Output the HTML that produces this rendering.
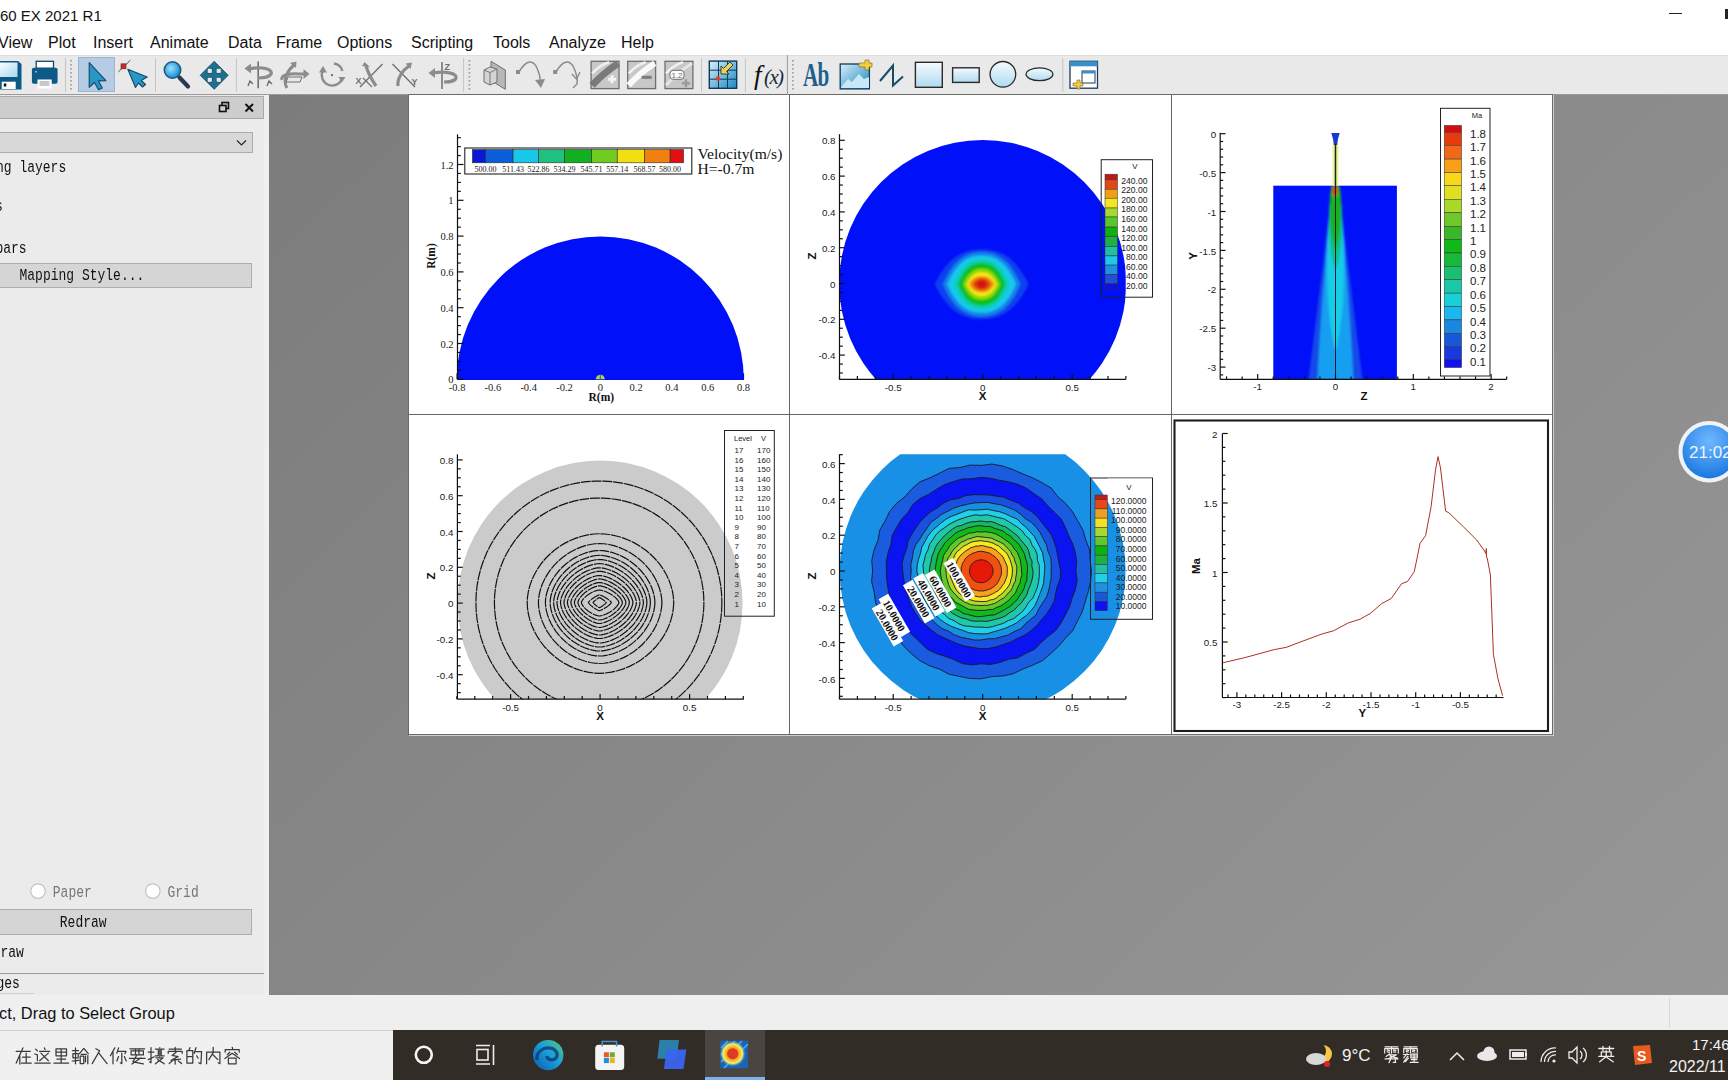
<!DOCTYPE html><html><head><meta charset="utf-8"><style>
*{margin:0;padding:0;box-sizing:border-box}
html,body{width:1728px;height:1080px;overflow:hidden;background:#fff;font-family:"Liberation Sans",sans-serif}
.a{position:absolute}
.t{position:absolute;white-space:nowrap;line-height:1}
.m{font-family:"Liberation Mono",monospace}
.s{font-family:"Liberation Serif",serif}
svg{position:absolute;overflow:visible}
</style></head><body>
<div class="t" style="left:0px;top:7.5px;font-size:15px;color:#111">60 EX 2021 R1</div>
<div class="a" style="left:1669px;top:13px;width:13px;height:1px;background:#222"></div>
<div class="a" style="left:1725px;top:9px;width:3px;height:10px;background:#222"></div>
<div class="t" style="left:-2px;top:35px;font-size:16px;color:#111">View</div>
<div class="t" style="left:48px;top:35px;font-size:16px;color:#111">Plot</div>
<div class="t" style="left:93px;top:35px;font-size:16px;color:#111">Insert</div>
<div class="t" style="left:150px;top:35px;font-size:16px;color:#111">Animate</div>
<div class="t" style="left:228px;top:35px;font-size:16px;color:#111">Data</div>
<div class="t" style="left:276px;top:35px;font-size:16px;color:#111">Frame</div>
<div class="t" style="left:337px;top:35px;font-size:16px;color:#111">Options</div>
<div class="t" style="left:411px;top:35px;font-size:16px;color:#111">Scripting</div>
<div class="t" style="left:493px;top:35px;font-size:16px;color:#111">Tools</div>
<div class="t" style="left:549px;top:35px;font-size:16px;color:#111">Analyze</div>
<div class="t" style="left:621px;top:35px;font-size:16px;color:#111">Help</div>
<div class="a" style="left:0;top:55px;width:1728px;height:40px;background:#e9e9e9;border-top:1px solid #dedede;border-bottom:1px solid #9a9a9a"></div>
<div class="a" style="left:0;top:95px;width:269px;height:900px;background:#ebebeb"></div>
<div class="a" style="left:269px;top:95px;width:1459px;height:900px;background:linear-gradient(137deg,#7c7c7c 0%,#979797 100%)"></div>
<div class="a" style="left:408px;top:94px;width:1145px;height:641px;background:#fff;border:1px solid #6a6a6a;box-shadow:1px 1px 0 #cfcfcf"></div>
<div class="a" style="left:0;top:995px;width:1728px;height:35px;background:#efefef"></div>
<div class="a" style="left:0;top:1030px;width:1728px;height:50px;background:#322c26"></div>
<div class="a" style="left:0;top:1030px;width:393px;height:50px;background:#f0f0f0;border-top:1px solid #d0d0d0"></div>
<svg style="left:0;top:0" width="1728" height="1080" viewBox="0 0 1728 1080">
<line x1="789.5" y1="95" x2="789.5" y2="735" stroke="#666" stroke-width="1"/>
<line x1="1171.5" y1="95" x2="1171.5" y2="735" stroke="#666" stroke-width="1"/>
<line x1="409" y1="414.5" x2="1553" y2="414.5" stroke="#666" stroke-width="1"/>
<line x1="457.5" y1="379.3" x2="744.0" y2="379.3" stroke="#111" stroke-width="1.2"/>
<line x1="457.10" y1="379.3" x2="457.10" y2="373.3" stroke="#111" stroke-width="1.2"/>
<text x="457.10" y="387.3" text-anchor="middle" dominant-baseline="central" font-family="Liberation Serif" font-size="10.5" fill="#1a1a1a">-0.8</text>
<line x1="466.05" y1="379.3" x2="466.05" y2="376.0" stroke="#111" stroke-width="1.2"/>
<line x1="475.00" y1="379.3" x2="475.00" y2="376.0" stroke="#111" stroke-width="1.2"/>
<line x1="483.95" y1="379.3" x2="483.95" y2="376.0" stroke="#111" stroke-width="1.2"/>
<line x1="492.90" y1="379.3" x2="492.90" y2="373.3" stroke="#111" stroke-width="1.2"/>
<text x="492.90" y="387.3" text-anchor="middle" dominant-baseline="central" font-family="Liberation Serif" font-size="10.5" fill="#1a1a1a">-0.6</text>
<line x1="501.85" y1="379.3" x2="501.85" y2="376.0" stroke="#111" stroke-width="1.2"/>
<line x1="510.80" y1="379.3" x2="510.80" y2="376.0" stroke="#111" stroke-width="1.2"/>
<line x1="519.75" y1="379.3" x2="519.75" y2="376.0" stroke="#111" stroke-width="1.2"/>
<line x1="528.70" y1="379.3" x2="528.70" y2="373.3" stroke="#111" stroke-width="1.2"/>
<text x="528.70" y="387.3" text-anchor="middle" dominant-baseline="central" font-family="Liberation Serif" font-size="10.5" fill="#1a1a1a">-0.4</text>
<line x1="537.65" y1="379.3" x2="537.65" y2="376.0" stroke="#111" stroke-width="1.2"/>
<line x1="546.60" y1="379.3" x2="546.60" y2="376.0" stroke="#111" stroke-width="1.2"/>
<line x1="555.55" y1="379.3" x2="555.55" y2="376.0" stroke="#111" stroke-width="1.2"/>
<line x1="564.50" y1="379.3" x2="564.50" y2="373.3" stroke="#111" stroke-width="1.2"/>
<text x="564.50" y="387.3" text-anchor="middle" dominant-baseline="central" font-family="Liberation Serif" font-size="10.5" fill="#1a1a1a">-0.2</text>
<line x1="573.45" y1="379.3" x2="573.45" y2="376.0" stroke="#111" stroke-width="1.2"/>
<line x1="582.40" y1="379.3" x2="582.40" y2="376.0" stroke="#111" stroke-width="1.2"/>
<line x1="591.35" y1="379.3" x2="591.35" y2="376.0" stroke="#111" stroke-width="1.2"/>
<line x1="600.30" y1="379.3" x2="600.30" y2="373.3" stroke="#111" stroke-width="1.2"/>
<text x="600.30" y="387.3" text-anchor="middle" dominant-baseline="central" font-family="Liberation Serif" font-size="10.5" fill="#1a1a1a">0</text>
<line x1="609.25" y1="379.3" x2="609.25" y2="376.0" stroke="#111" stroke-width="1.2"/>
<line x1="618.20" y1="379.3" x2="618.20" y2="376.0" stroke="#111" stroke-width="1.2"/>
<line x1="627.15" y1="379.3" x2="627.15" y2="376.0" stroke="#111" stroke-width="1.2"/>
<line x1="636.10" y1="379.3" x2="636.10" y2="373.3" stroke="#111" stroke-width="1.2"/>
<text x="636.10" y="387.3" text-anchor="middle" dominant-baseline="central" font-family="Liberation Serif" font-size="10.5" fill="#1a1a1a">0.2</text>
<line x1="645.05" y1="379.3" x2="645.05" y2="376.0" stroke="#111" stroke-width="1.2"/>
<line x1="654.00" y1="379.3" x2="654.00" y2="376.0" stroke="#111" stroke-width="1.2"/>
<line x1="662.95" y1="379.3" x2="662.95" y2="376.0" stroke="#111" stroke-width="1.2"/>
<line x1="671.90" y1="379.3" x2="671.90" y2="373.3" stroke="#111" stroke-width="1.2"/>
<text x="671.90" y="387.3" text-anchor="middle" dominant-baseline="central" font-family="Liberation Serif" font-size="10.5" fill="#1a1a1a">0.4</text>
<line x1="680.85" y1="379.3" x2="680.85" y2="376.0" stroke="#111" stroke-width="1.2"/>
<line x1="689.80" y1="379.3" x2="689.80" y2="376.0" stroke="#111" stroke-width="1.2"/>
<line x1="698.75" y1="379.3" x2="698.75" y2="376.0" stroke="#111" stroke-width="1.2"/>
<line x1="707.70" y1="379.3" x2="707.70" y2="373.3" stroke="#111" stroke-width="1.2"/>
<text x="707.70" y="387.3" text-anchor="middle" dominant-baseline="central" font-family="Liberation Serif" font-size="10.5" fill="#1a1a1a">0.6</text>
<line x1="716.65" y1="379.3" x2="716.65" y2="376.0" stroke="#111" stroke-width="1.2"/>
<line x1="725.60" y1="379.3" x2="725.60" y2="376.0" stroke="#111" stroke-width="1.2"/>
<line x1="734.55" y1="379.3" x2="734.55" y2="376.0" stroke="#111" stroke-width="1.2"/>
<line x1="743.50" y1="379.3" x2="743.50" y2="373.3" stroke="#111" stroke-width="1.2"/>
<text x="743.50" y="387.3" text-anchor="middle" dominant-baseline="central" font-family="Liberation Serif" font-size="10.5" fill="#1a1a1a">0.8</text>
<defs><clipPath id="c1"><rect x="457.5" y="134" width="286.5" height="246"/></clipPath></defs>
<g clip-path="url(#c1)"><path d="M456.8,379.90000000000003 A143.5,143.5 0 0 1 743.8,379.90000000000003 Z" fill="#0010f8"/></g>
<path d="M595.8,379.3 A4.5,4.5 0 0 1 604.8,379.3 Z" fill="#a8d84a"/>
<line x1="600.3" y1="374.3" x2="600.3" y2="379.3" stroke="#3050a0" stroke-width="1"/>
<line x1="457.5" y1="134.3" x2="457.5" y2="379.3" stroke="#111" stroke-width="1.2"/>
<line x1="457.5" y1="379.30" x2="463.5" y2="379.30" stroke="#111" stroke-width="1.2"/>
<text x="453.5" y="379.90" text-anchor="end" dominant-baseline="central" font-family="Liberation Serif" font-size="10.5" fill="#1a1a1a">0</text>
<line x1="457.5" y1="370.35" x2="460.8" y2="370.35" stroke="#111" stroke-width="1.2"/>
<line x1="457.5" y1="361.40" x2="460.8" y2="361.40" stroke="#111" stroke-width="1.2"/>
<line x1="457.5" y1="352.45" x2="460.8" y2="352.45" stroke="#111" stroke-width="1.2"/>
<line x1="457.5" y1="343.50" x2="463.5" y2="343.50" stroke="#111" stroke-width="1.2"/>
<text x="453.5" y="344.10" text-anchor="end" dominant-baseline="central" font-family="Liberation Serif" font-size="10.5" fill="#1a1a1a">0.2</text>
<line x1="457.5" y1="334.55" x2="460.8" y2="334.55" stroke="#111" stroke-width="1.2"/>
<line x1="457.5" y1="325.60" x2="460.8" y2="325.60" stroke="#111" stroke-width="1.2"/>
<line x1="457.5" y1="316.65" x2="460.8" y2="316.65" stroke="#111" stroke-width="1.2"/>
<line x1="457.5" y1="307.70" x2="463.5" y2="307.70" stroke="#111" stroke-width="1.2"/>
<text x="453.5" y="308.30" text-anchor="end" dominant-baseline="central" font-family="Liberation Serif" font-size="10.5" fill="#1a1a1a">0.4</text>
<line x1="457.5" y1="298.75" x2="460.8" y2="298.75" stroke="#111" stroke-width="1.2"/>
<line x1="457.5" y1="289.80" x2="460.8" y2="289.80" stroke="#111" stroke-width="1.2"/>
<line x1="457.5" y1="280.85" x2="460.8" y2="280.85" stroke="#111" stroke-width="1.2"/>
<line x1="457.5" y1="271.90" x2="463.5" y2="271.90" stroke="#111" stroke-width="1.2"/>
<text x="453.5" y="272.50" text-anchor="end" dominant-baseline="central" font-family="Liberation Serif" font-size="10.5" fill="#1a1a1a">0.6</text>
<line x1="457.5" y1="262.95" x2="460.8" y2="262.95" stroke="#111" stroke-width="1.2"/>
<line x1="457.5" y1="254.00" x2="460.8" y2="254.00" stroke="#111" stroke-width="1.2"/>
<line x1="457.5" y1="245.05" x2="460.8" y2="245.05" stroke="#111" stroke-width="1.2"/>
<line x1="457.5" y1="236.10" x2="463.5" y2="236.10" stroke="#111" stroke-width="1.2"/>
<text x="453.5" y="236.70" text-anchor="end" dominant-baseline="central" font-family="Liberation Serif" font-size="10.5" fill="#1a1a1a">0.8</text>
<line x1="457.5" y1="227.15" x2="460.8" y2="227.15" stroke="#111" stroke-width="1.2"/>
<line x1="457.5" y1="218.20" x2="460.8" y2="218.20" stroke="#111" stroke-width="1.2"/>
<line x1="457.5" y1="209.25" x2="460.8" y2="209.25" stroke="#111" stroke-width="1.2"/>
<line x1="457.5" y1="200.30" x2="463.5" y2="200.30" stroke="#111" stroke-width="1.2"/>
<text x="453.5" y="200.90" text-anchor="end" dominant-baseline="central" font-family="Liberation Serif" font-size="10.5" fill="#1a1a1a">1</text>
<line x1="457.5" y1="191.35" x2="460.8" y2="191.35" stroke="#111" stroke-width="1.2"/>
<line x1="457.5" y1="182.40" x2="460.8" y2="182.40" stroke="#111" stroke-width="1.2"/>
<line x1="457.5" y1="173.45" x2="460.8" y2="173.45" stroke="#111" stroke-width="1.2"/>
<line x1="457.5" y1="164.50" x2="463.5" y2="164.50" stroke="#111" stroke-width="1.2"/>
<text x="453.5" y="165.10" text-anchor="end" dominant-baseline="central" font-family="Liberation Serif" font-size="10.5" fill="#1a1a1a">1.2</text>
<line x1="457.5" y1="155.55" x2="460.8" y2="155.55" stroke="#111" stroke-width="1.2"/>
<line x1="457.5" y1="146.60" x2="460.8" y2="146.60" stroke="#111" stroke-width="1.2"/>
<line x1="457.5" y1="137.65" x2="460.8" y2="137.65" stroke="#111" stroke-width="1.2"/>
<text x="601.3" y="396.5" text-anchor="middle" dominant-baseline="central" font-family="Liberation Serif" font-weight="bold" font-size="11.5" fill="#111">R(m)</text>
<text transform="translate(431,256) rotate(-90)" text-anchor="middle" dominant-baseline="central" font-family="Liberation Serif" font-weight="bold" font-size="11.5" fill="#111">R(m)</text>
<rect x="464.8" y="148" width="227" height="26" fill="#fff" stroke="#222" stroke-width="1.1"/>
<rect x="472.42" y="149.6" width="13.14" height="13.2" fill="#0818d8" stroke="#2a2a2a" stroke-width="0.6"/>
<rect x="485.56" y="149.6" width="27.50" height="13.2" fill="#0a5ed8" stroke="#2a2a2a" stroke-width="0.6"/>
<rect x="513.06" y="149.6" width="25.36" height="13.2" fill="#18c8e8" stroke="#2a2a2a" stroke-width="0.6"/>
<rect x="538.42" y="149.6" width="25.97" height="13.2" fill="#20c080" stroke="#2a2a2a" stroke-width="0.6"/>
<rect x="564.39" y="149.6" width="27.19" height="13.2" fill="#10b020" stroke="#2a2a2a" stroke-width="0.6"/>
<rect x="591.58" y="149.6" width="25.67" height="13.2" fill="#70cc20" stroke="#2a2a2a" stroke-width="0.6"/>
<rect x="617.25" y="149.6" width="27.19" height="13.2" fill="#f0e010" stroke="#2a2a2a" stroke-width="0.6"/>
<rect x="644.45" y="149.6" width="25.67" height="13.2" fill="#f08010" stroke="#2a2a2a" stroke-width="0.6"/>
<rect x="670.11" y="149.6" width="13.44" height="13.2" fill="#e01010" stroke="#2a2a2a" stroke-width="0.6"/>
<text x="485.6" y="169" text-anchor="middle" dominant-baseline="central" font-family="Liberation Serif" font-size="8" fill="#222">500.00</text>
<text x="513.1" y="169" text-anchor="middle" dominant-baseline="central" font-family="Liberation Serif" font-size="8" fill="#222">511.43</text>
<text x="538.4" y="169" text-anchor="middle" dominant-baseline="central" font-family="Liberation Serif" font-size="8" fill="#222">522.86</text>
<text x="564.4" y="169" text-anchor="middle" dominant-baseline="central" font-family="Liberation Serif" font-size="8" fill="#222">534.29</text>
<text x="591.6" y="169" text-anchor="middle" dominant-baseline="central" font-family="Liberation Serif" font-size="8" fill="#222">545.71</text>
<text x="617.3" y="169" text-anchor="middle" dominant-baseline="central" font-family="Liberation Serif" font-size="8" fill="#222">557.14</text>
<text x="644.4" y="169" text-anchor="middle" dominant-baseline="central" font-family="Liberation Serif" font-size="8" fill="#222">568.57</text>
<text x="670.1" y="169" text-anchor="middle" dominant-baseline="central" font-family="Liberation Serif" font-size="8" fill="#222">580.00</text>
<text x="697.5" y="153" dominant-baseline="central" font-family="Liberation Serif" font-size="15.6" fill="#111">Velocity(m/s)</text>
<text x="697.5" y="168.5" dominant-baseline="central" font-family="Liberation Serif" font-size="15.6" fill="#111">H=-0.7m</text>
<defs><clipPath id="c2"><rect x="839.5" y="134.2" width="286.2" height="245.2"/></clipPath><filter id="bl1" x="-20%" y="-20%" width="140%" height="140%"><feGaussianBlur stdDeviation="1.0"/></filter></defs>
<g clip-path="url(#c2)"><circle cx="982.7" cy="283.5" r="143.5" fill="#0010f8"/></g>
<g filter="url(#bl1)">
<path d="M934.80,284.20 C945.12,262.50 958.25,249.20 981.70,249.20 C1005.15,249.20 1018.28,262.50 1028.60,284.20 C1018.28,305.90 1005.15,319.20 981.70,319.20 C958.25,319.20 945.12,305.90 934.80,284.20 Z" fill="#1040f0"/>
<path d="M943.00,284.20 C951.51,264.17 962.35,251.90 981.70,251.90 C1001.05,251.90 1011.89,264.17 1020.40,284.20 C1011.89,304.23 1001.05,316.50 981.70,316.50 C962.35,316.50 951.51,304.23 943.00,284.20 Z" fill="#1880e8"/>
<path d="M947.40,284.20 C954.95,266.47 964.55,255.60 981.70,255.60 C998.85,255.60 1008.45,266.47 1016.00,284.20 C1008.45,301.93 998.85,312.80 981.70,312.80 C964.55,312.80 954.95,301.93 947.40,284.20 Z" fill="#18c8f0"/>
<path d="M953.70,284.20 C959.86,268.76 967.70,259.30 981.70,259.30 C995.70,259.30 1003.54,268.76 1009.70,284.20 C1003.54,299.64 995.70,309.10 981.70,309.10 C967.70,309.10 959.86,299.64 953.70,284.20 Z" fill="#10d0b0"/>
<path d="M957.70,284.20 C962.98,270.87 969.70,262.70 981.70,262.70 C993.70,262.70 1000.42,270.87 1005.70,284.20 C1000.42,297.53 993.70,305.70 981.70,305.70 C969.70,305.70 962.98,297.53 957.70,284.20 Z" fill="#10c040"/>
<path d="M961.20,284.20 C965.71,272.17 971.45,264.80 981.70,264.80 C991.95,264.80 997.69,272.17 1002.20,284.20 C997.69,296.23 991.95,303.60 981.70,303.60 C971.45,303.60 965.71,296.23 961.20,284.20 Z" fill="#10c010"/>
<path d="M963.30,284.20 C967.35,274.53 972.50,268.60 981.70,268.60 C990.90,268.60 996.05,274.53 1000.10,284.20 C996.05,293.87 990.90,299.80 981.70,299.80 C972.50,299.80 967.35,293.87 963.30,284.20 Z" fill="#90d810"/>
<path d="M966.70,284.20 C970.00,276.82 974.20,272.30 981.70,272.30 C989.20,272.30 993.40,276.82 996.70,284.20 C993.40,291.58 989.20,296.10 981.70,296.10 C974.20,296.10 970.00,291.58 966.70,284.20 Z" fill="#f8e818"/>
<path d="M968.90,284.20 C971.72,279.12 975.30,276.00 981.70,276.00 C988.10,276.00 991.68,279.12 994.50,284.20 C991.68,289.28 988.10,292.40 981.70,292.40 C975.30,292.40 971.72,289.28 968.90,284.20 Z" fill="#f09010"/>
<path d="M972.60,284.20 C974.60,280.48 977.15,278.20 981.70,278.20 C986.25,278.20 988.80,280.48 990.80,284.20 C988.80,287.92 986.25,290.20 981.70,290.20 C977.15,290.20 974.60,287.92 972.60,284.20 Z" fill="#e04010"/>
<path d="M976.70,284.20 C977.80,281.72 979.20,280.20 981.70,280.20 C984.20,280.20 985.60,281.72 986.70,284.20 C985.60,286.68 984.20,288.20 981.70,288.20 C979.20,288.20 977.80,286.68 976.70,284.20 Z" fill="#d01808"/>
</g>
<line x1="839.5" y1="134.2" x2="839.5" y2="379.4" stroke="#111" stroke-width="1.2"/>
<line x1="839.5" y1="373.00" x2="842.8" y2="373.00" stroke="#111" stroke-width="1.2"/>
<line x1="839.5" y1="364.05" x2="842.8" y2="364.05" stroke="#111" stroke-width="1.2"/>
<line x1="839.5" y1="355.10" x2="844.8" y2="355.10" stroke="#111" stroke-width="1.2"/>
<text x="835.5" y="355.70" text-anchor="end" dominant-baseline="central" font-family="Liberation Sans" font-size="9.8" fill="#1a1a1a">-0.4</text>
<line x1="839.5" y1="346.15" x2="842.8" y2="346.15" stroke="#111" stroke-width="1.2"/>
<line x1="839.5" y1="337.20" x2="842.8" y2="337.20" stroke="#111" stroke-width="1.2"/>
<line x1="839.5" y1="328.25" x2="842.8" y2="328.25" stroke="#111" stroke-width="1.2"/>
<line x1="839.5" y1="319.30" x2="844.8" y2="319.30" stroke="#111" stroke-width="1.2"/>
<text x="835.5" y="319.90" text-anchor="end" dominant-baseline="central" font-family="Liberation Sans" font-size="9.8" fill="#1a1a1a">-0.2</text>
<line x1="839.5" y1="310.35" x2="842.8" y2="310.35" stroke="#111" stroke-width="1.2"/>
<line x1="839.5" y1="301.40" x2="842.8" y2="301.40" stroke="#111" stroke-width="1.2"/>
<line x1="839.5" y1="292.45" x2="842.8" y2="292.45" stroke="#111" stroke-width="1.2"/>
<line x1="839.5" y1="283.50" x2="844.8" y2="283.50" stroke="#111" stroke-width="1.2"/>
<text x="835.5" y="284.10" text-anchor="end" dominant-baseline="central" font-family="Liberation Sans" font-size="9.8" fill="#1a1a1a">0</text>
<line x1="839.5" y1="274.55" x2="842.8" y2="274.55" stroke="#111" stroke-width="1.2"/>
<line x1="839.5" y1="265.60" x2="842.8" y2="265.60" stroke="#111" stroke-width="1.2"/>
<line x1="839.5" y1="256.65" x2="842.8" y2="256.65" stroke="#111" stroke-width="1.2"/>
<line x1="839.5" y1="247.70" x2="844.8" y2="247.70" stroke="#111" stroke-width="1.2"/>
<text x="835.5" y="248.30" text-anchor="end" dominant-baseline="central" font-family="Liberation Sans" font-size="9.8" fill="#1a1a1a">0.2</text>
<line x1="839.5" y1="238.75" x2="842.8" y2="238.75" stroke="#111" stroke-width="1.2"/>
<line x1="839.5" y1="229.80" x2="842.8" y2="229.80" stroke="#111" stroke-width="1.2"/>
<line x1="839.5" y1="220.85" x2="842.8" y2="220.85" stroke="#111" stroke-width="1.2"/>
<line x1="839.5" y1="211.90" x2="844.8" y2="211.90" stroke="#111" stroke-width="1.2"/>
<text x="835.5" y="212.50" text-anchor="end" dominant-baseline="central" font-family="Liberation Sans" font-size="9.8" fill="#1a1a1a">0.4</text>
<line x1="839.5" y1="202.95" x2="842.8" y2="202.95" stroke="#111" stroke-width="1.2"/>
<line x1="839.5" y1="194.00" x2="842.8" y2="194.00" stroke="#111" stroke-width="1.2"/>
<line x1="839.5" y1="185.05" x2="842.8" y2="185.05" stroke="#111" stroke-width="1.2"/>
<line x1="839.5" y1="176.10" x2="844.8" y2="176.10" stroke="#111" stroke-width="1.2"/>
<text x="835.5" y="176.70" text-anchor="end" dominant-baseline="central" font-family="Liberation Sans" font-size="9.8" fill="#1a1a1a">0.6</text>
<line x1="839.5" y1="167.15" x2="842.8" y2="167.15" stroke="#111" stroke-width="1.2"/>
<line x1="839.5" y1="158.20" x2="842.8" y2="158.20" stroke="#111" stroke-width="1.2"/>
<line x1="839.5" y1="149.25" x2="842.8" y2="149.25" stroke="#111" stroke-width="1.2"/>
<line x1="839.5" y1="140.30" x2="844.8" y2="140.30" stroke="#111" stroke-width="1.2"/>
<text x="835.5" y="140.90" text-anchor="end" dominant-baseline="central" font-family="Liberation Sans" font-size="9.8" fill="#1a1a1a">0.8</text>
<line x1="839.5" y1="379.4" x2="1125.7" y2="379.4" stroke="#111" stroke-width="1.2"/>
<line x1="839.50" y1="379.4" x2="839.50" y2="376.09999999999997" stroke="#111" stroke-width="1.2"/>
<line x1="857.40" y1="379.4" x2="857.40" y2="376.09999999999997" stroke="#111" stroke-width="1.2"/>
<line x1="875.30" y1="379.4" x2="875.30" y2="376.09999999999997" stroke="#111" stroke-width="1.2"/>
<line x1="893.20" y1="379.4" x2="893.20" y2="374.09999999999997" stroke="#111" stroke-width="1.2"/>
<text x="893.20" y="387.2" text-anchor="middle" dominant-baseline="central" font-family="Liberation Sans" font-size="9.8" fill="#1a1a1a">-0.5</text>
<line x1="911.10" y1="379.4" x2="911.10" y2="376.09999999999997" stroke="#111" stroke-width="1.2"/>
<line x1="929.00" y1="379.4" x2="929.00" y2="376.09999999999997" stroke="#111" stroke-width="1.2"/>
<line x1="946.90" y1="379.4" x2="946.90" y2="376.09999999999997" stroke="#111" stroke-width="1.2"/>
<line x1="964.80" y1="379.4" x2="964.80" y2="376.09999999999997" stroke="#111" stroke-width="1.2"/>
<line x1="982.70" y1="379.4" x2="982.70" y2="374.09999999999997" stroke="#111" stroke-width="1.2"/>
<text x="982.70" y="387.2" text-anchor="middle" dominant-baseline="central" font-family="Liberation Sans" font-size="9.8" fill="#1a1a1a">0</text>
<line x1="1000.60" y1="379.4" x2="1000.60" y2="376.09999999999997" stroke="#111" stroke-width="1.2"/>
<line x1="1018.50" y1="379.4" x2="1018.50" y2="376.09999999999997" stroke="#111" stroke-width="1.2"/>
<line x1="1036.40" y1="379.4" x2="1036.40" y2="376.09999999999997" stroke="#111" stroke-width="1.2"/>
<line x1="1054.30" y1="379.4" x2="1054.30" y2="376.09999999999997" stroke="#111" stroke-width="1.2"/>
<line x1="1072.20" y1="379.4" x2="1072.20" y2="374.09999999999997" stroke="#111" stroke-width="1.2"/>
<text x="1072.20" y="387.2" text-anchor="middle" dominant-baseline="central" font-family="Liberation Sans" font-size="9.8" fill="#1a1a1a">0.5</text>
<line x1="1090.10" y1="379.4" x2="1090.10" y2="376.09999999999997" stroke="#111" stroke-width="1.2"/>
<line x1="1108.00" y1="379.4" x2="1108.00" y2="376.09999999999997" stroke="#111" stroke-width="1.2"/>
<line x1="1125.90" y1="379.4" x2="1125.90" y2="376.09999999999997" stroke="#111" stroke-width="1.2"/>
<text x="982.7" y="396" text-anchor="middle" dominant-baseline="central" font-family="Liberation Sans" font-weight="bold" font-size="11.5" fill="#111">X</text>
<text transform="translate(812,256) rotate(-90)" text-anchor="middle" dominant-baseline="central" font-family="Liberation Sans" font-weight="bold" font-size="11.5" fill="#111">Z</text>
<rect x="1101.2" y="159.7" width="51.3" height="137.5" fill="none" stroke="#222" stroke-width="1"/>
<text x="1134.8" y="166.5" text-anchor="middle" dominant-baseline="central" font-family="Liberation Sans" font-size="8" fill="#222">V</text>
<rect x="1105" y="174.19" width="12.5" height="5.64" fill="#c01818" stroke="#333" stroke-width="0.5"/>
<rect x="1105" y="179.83" width="12.5" height="9.40" fill="#e04818" stroke="#333" stroke-width="0.5"/>
<rect x="1105" y="189.23" width="12.5" height="8.99" fill="#f0a018" stroke="#333" stroke-width="0.5"/>
<rect x="1105" y="198.22" width="12.5" height="9.80" fill="#f5e620" stroke="#333" stroke-width="0.5"/>
<rect x="1105" y="208.02" width="12.5" height="8.99" fill="#a8d830" stroke="#333" stroke-width="0.5"/>
<rect x="1105" y="217.01" width="12.5" height="10.07" fill="#58c828" stroke="#333" stroke-width="0.5"/>
<rect x="1105" y="227.08" width="12.5" height="9.13" fill="#10b010" stroke="#333" stroke-width="0.5"/>
<rect x="1105" y="236.21" width="12.5" height="10.07" fill="#20b040" stroke="#333" stroke-width="0.5"/>
<rect x="1105" y="246.28" width="12.5" height="9.66" fill="#20c0a0" stroke="#333" stroke-width="0.5"/>
<rect x="1105" y="255.94" width="12.5" height="9.13" fill="#20c8e8" stroke="#333" stroke-width="0.5"/>
<rect x="1105" y="265.07" width="12.5" height="9.40" fill="#2090e0" stroke="#333" stroke-width="0.5"/>
<rect x="1105" y="274.46" width="12.5" height="9.40" fill="#2050d8" stroke="#333" stroke-width="0.5"/>
<rect x="1105" y="283.86" width="12.5" height="5.37" fill="#1010e0" stroke="#333" stroke-width="0.5"/>
<text x="1147.5" y="180.80" text-anchor="end" dominant-baseline="central" font-family="Liberation Sans" font-size="8.6" fill="#1a1a1a">240.00</text>
<text x="1147.5" y="190.35" text-anchor="end" dominant-baseline="central" font-family="Liberation Sans" font-size="8.6" fill="#1a1a1a">220.00</text>
<text x="1147.5" y="199.89" text-anchor="end" dominant-baseline="central" font-family="Liberation Sans" font-size="8.6" fill="#1a1a1a">200.00</text>
<text x="1147.5" y="209.44" text-anchor="end" dominant-baseline="central" font-family="Liberation Sans" font-size="8.6" fill="#1a1a1a">180.00</text>
<text x="1147.5" y="218.98" text-anchor="end" dominant-baseline="central" font-family="Liberation Sans" font-size="8.6" fill="#1a1a1a">160.00</text>
<text x="1147.5" y="228.53" text-anchor="end" dominant-baseline="central" font-family="Liberation Sans" font-size="8.6" fill="#1a1a1a">140.00</text>
<text x="1147.5" y="238.07" text-anchor="end" dominant-baseline="central" font-family="Liberation Sans" font-size="8.6" fill="#1a1a1a">120.00</text>
<text x="1147.5" y="247.62" text-anchor="end" dominant-baseline="central" font-family="Liberation Sans" font-size="8.6" fill="#1a1a1a">100.00</text>
<text x="1147.5" y="257.16" text-anchor="end" dominant-baseline="central" font-family="Liberation Sans" font-size="8.6" fill="#1a1a1a">80.00</text>
<text x="1147.5" y="266.71" text-anchor="end" dominant-baseline="central" font-family="Liberation Sans" font-size="8.6" fill="#1a1a1a">60.00</text>
<text x="1147.5" y="276.25" text-anchor="end" dominant-baseline="central" font-family="Liberation Sans" font-size="8.6" fill="#1a1a1a">40.00</text>
<text x="1147.5" y="285.80" text-anchor="end" dominant-baseline="central" font-family="Liberation Sans" font-size="8.6" fill="#1a1a1a">20.00</text>
<rect x="1273.3" y="185.7" width="123.6" height="193.7" fill="#0010f8"/>
<defs><clipPath id="c3"><rect x="1273.3" y="185.7" width="123.6" height="193.3"/></clipPath><filter id="bl2" x="-50%" y="-10%" width="200%" height="120%"><feGaussianBlur stdDeviation="1.2"/></filter></defs>
<g clip-path="url(#c3)" filter="url(#bl2)">
<path d="M1332.5,186 L1308.5,380 L1362.5,380 L1338.5,186 Z" fill="#1448ea"/>
<path d="M1332.0,186 C1326.5,250 1319.5,330 1317.5,380 L1353.5,380 C1351.5,330 1344.5,250 1339.0,186 Z" fill="#189ef0"/>
<path d="M1331.5,186 C1326.5,240 1323.5,300 1334.5,348 L1336.5,348 C1347.5,300 1344.5,240 1339.5,186 Z" fill="#18cce8"/>
<path d="M1331.5,186 C1327.5,215 1327.5,245 1334.5,268 L1336.5,268 C1343.5,245 1343.5,215 1339.5,186 Z" fill="#10c090"/>
<path d="M1331.5,186 C1328.5,205 1329.5,228 1334.5,248 L1336.5,248 C1341.5,228 1342.5,205 1339.5,186 Z" fill="#18b020"/>
<ellipse cx="1335.0" cy="191" rx="2.6" ry="5" fill="#d83010"/>
</g>
<rect x="1332.5" y="143" width="6" height="43" fill="#f0f0a0"/>
<rect x="1334.0" y="143" width="3" height="43" fill="#a8c870"/>
<path d="M1331.3,133 L1339.7,133 L1338.0,139 L1337.1,145 L1333.9,145 L1333.0,139 Z" fill="#1838d0"/>
<line x1="1335.5" y1="144" x2="1335.5" y2="379" stroke="#111" stroke-width="0.9"/>
<line x1="1220.2" y1="132.8" x2="1220.2" y2="379.4" stroke="#111" stroke-width="1.2"/>
<line x1="1220.2" y1="374.88" x2="1223.2" y2="374.88" stroke="#111" stroke-width="1.2"/>
<line x1="1220.2" y1="367.10" x2="1225.5" y2="367.10" stroke="#111" stroke-width="1.2"/>
<text x="1216.2" y="367.70" text-anchor="end" dominant-baseline="central" font-family="Liberation Sans" font-size="9.8" fill="#1a1a1a">-3</text>
<line x1="1220.2" y1="359.32" x2="1223.2" y2="359.32" stroke="#111" stroke-width="1.2"/>
<line x1="1220.2" y1="351.54" x2="1223.2" y2="351.54" stroke="#111" stroke-width="1.2"/>
<line x1="1220.2" y1="343.76" x2="1223.2" y2="343.76" stroke="#111" stroke-width="1.2"/>
<line x1="1220.2" y1="335.98" x2="1223.2" y2="335.98" stroke="#111" stroke-width="1.2"/>
<line x1="1220.2" y1="328.20" x2="1225.5" y2="328.20" stroke="#111" stroke-width="1.2"/>
<text x="1216.2" y="328.80" text-anchor="end" dominant-baseline="central" font-family="Liberation Sans" font-size="9.8" fill="#1a1a1a">-2.5</text>
<line x1="1220.2" y1="320.42" x2="1223.2" y2="320.42" stroke="#111" stroke-width="1.2"/>
<line x1="1220.2" y1="312.64" x2="1223.2" y2="312.64" stroke="#111" stroke-width="1.2"/>
<line x1="1220.2" y1="304.86" x2="1223.2" y2="304.86" stroke="#111" stroke-width="1.2"/>
<line x1="1220.2" y1="297.08" x2="1223.2" y2="297.08" stroke="#111" stroke-width="1.2"/>
<line x1="1220.2" y1="289.30" x2="1225.5" y2="289.30" stroke="#111" stroke-width="1.2"/>
<text x="1216.2" y="289.90" text-anchor="end" dominant-baseline="central" font-family="Liberation Sans" font-size="9.8" fill="#1a1a1a">-2</text>
<line x1="1220.2" y1="281.52" x2="1223.2" y2="281.52" stroke="#111" stroke-width="1.2"/>
<line x1="1220.2" y1="273.74" x2="1223.2" y2="273.74" stroke="#111" stroke-width="1.2"/>
<line x1="1220.2" y1="265.96" x2="1223.2" y2="265.96" stroke="#111" stroke-width="1.2"/>
<line x1="1220.2" y1="258.18" x2="1223.2" y2="258.18" stroke="#111" stroke-width="1.2"/>
<line x1="1220.2" y1="250.40" x2="1225.5" y2="250.40" stroke="#111" stroke-width="1.2"/>
<text x="1216.2" y="251.00" text-anchor="end" dominant-baseline="central" font-family="Liberation Sans" font-size="9.8" fill="#1a1a1a">-1.5</text>
<line x1="1220.2" y1="242.62" x2="1223.2" y2="242.62" stroke="#111" stroke-width="1.2"/>
<line x1="1220.2" y1="234.84" x2="1223.2" y2="234.84" stroke="#111" stroke-width="1.2"/>
<line x1="1220.2" y1="227.06" x2="1223.2" y2="227.06" stroke="#111" stroke-width="1.2"/>
<line x1="1220.2" y1="219.28" x2="1223.2" y2="219.28" stroke="#111" stroke-width="1.2"/>
<line x1="1220.2" y1="211.50" x2="1225.5" y2="211.50" stroke="#111" stroke-width="1.2"/>
<text x="1216.2" y="212.10" text-anchor="end" dominant-baseline="central" font-family="Liberation Sans" font-size="9.8" fill="#1a1a1a">-1</text>
<line x1="1220.2" y1="203.72" x2="1223.2" y2="203.72" stroke="#111" stroke-width="1.2"/>
<line x1="1220.2" y1="195.94" x2="1223.2" y2="195.94" stroke="#111" stroke-width="1.2"/>
<line x1="1220.2" y1="188.16" x2="1223.2" y2="188.16" stroke="#111" stroke-width="1.2"/>
<line x1="1220.2" y1="180.38" x2="1223.2" y2="180.38" stroke="#111" stroke-width="1.2"/>
<line x1="1220.2" y1="172.60" x2="1225.5" y2="172.60" stroke="#111" stroke-width="1.2"/>
<text x="1216.2" y="173.20" text-anchor="end" dominant-baseline="central" font-family="Liberation Sans" font-size="9.8" fill="#1a1a1a">-0.5</text>
<line x1="1220.2" y1="164.82" x2="1223.2" y2="164.82" stroke="#111" stroke-width="1.2"/>
<line x1="1220.2" y1="157.04" x2="1223.2" y2="157.04" stroke="#111" stroke-width="1.2"/>
<line x1="1220.2" y1="149.26" x2="1223.2" y2="149.26" stroke="#111" stroke-width="1.2"/>
<line x1="1220.2" y1="141.48" x2="1223.2" y2="141.48" stroke="#111" stroke-width="1.2"/>
<line x1="1220.2" y1="133.70" x2="1225.5" y2="133.70" stroke="#111" stroke-width="1.2"/>
<text x="1216.2" y="134.30" text-anchor="end" dominant-baseline="central" font-family="Liberation Sans" font-size="9.8" fill="#1a1a1a">0</text>
<line x1="1220.2" y1="379.4" x2="1506.5" y2="379.4" stroke="#111" stroke-width="1.2"/>
<line x1="1226.58" y1="379.4" x2="1226.58" y2="376.4" stroke="#111" stroke-width="1.2"/>
<line x1="1242.14" y1="379.4" x2="1242.14" y2="376.4" stroke="#111" stroke-width="1.2"/>
<line x1="1257.70" y1="379.4" x2="1257.70" y2="374.09999999999997" stroke="#111" stroke-width="1.2"/>
<text x="1257.70" y="386.9" text-anchor="middle" dominant-baseline="central" font-family="Liberation Sans" font-size="9.8" fill="#1a1a1a">-1</text>
<line x1="1273.26" y1="379.4" x2="1273.26" y2="376.4" stroke="#111" stroke-width="1.2"/>
<line x1="1288.82" y1="379.4" x2="1288.82" y2="376.4" stroke="#111" stroke-width="1.2"/>
<line x1="1304.38" y1="379.4" x2="1304.38" y2="376.4" stroke="#111" stroke-width="1.2"/>
<line x1="1319.94" y1="379.4" x2="1319.94" y2="376.4" stroke="#111" stroke-width="1.2"/>
<line x1="1335.50" y1="379.4" x2="1335.50" y2="374.09999999999997" stroke="#111" stroke-width="1.2"/>
<text x="1335.50" y="386.9" text-anchor="middle" dominant-baseline="central" font-family="Liberation Sans" font-size="9.8" fill="#1a1a1a">0</text>
<line x1="1351.06" y1="379.4" x2="1351.06" y2="376.4" stroke="#111" stroke-width="1.2"/>
<line x1="1366.62" y1="379.4" x2="1366.62" y2="376.4" stroke="#111" stroke-width="1.2"/>
<line x1="1382.18" y1="379.4" x2="1382.18" y2="376.4" stroke="#111" stroke-width="1.2"/>
<line x1="1397.74" y1="379.4" x2="1397.74" y2="376.4" stroke="#111" stroke-width="1.2"/>
<line x1="1413.30" y1="379.4" x2="1413.30" y2="374.09999999999997" stroke="#111" stroke-width="1.2"/>
<text x="1413.30" y="386.9" text-anchor="middle" dominant-baseline="central" font-family="Liberation Sans" font-size="9.8" fill="#1a1a1a">1</text>
<line x1="1428.86" y1="379.4" x2="1428.86" y2="376.4" stroke="#111" stroke-width="1.2"/>
<line x1="1444.42" y1="379.4" x2="1444.42" y2="376.4" stroke="#111" stroke-width="1.2"/>
<line x1="1459.98" y1="379.4" x2="1459.98" y2="376.4" stroke="#111" stroke-width="1.2"/>
<line x1="1475.54" y1="379.4" x2="1475.54" y2="376.4" stroke="#111" stroke-width="1.2"/>
<line x1="1491.10" y1="379.4" x2="1491.10" y2="374.09999999999997" stroke="#111" stroke-width="1.2"/>
<text x="1491.10" y="386.9" text-anchor="middle" dominant-baseline="central" font-family="Liberation Sans" font-size="9.8" fill="#1a1a1a">2</text>
<line x1="1506.66" y1="379.4" x2="1506.66" y2="376.4" stroke="#111" stroke-width="1.2"/>
<text x="1364" y="395.5" text-anchor="middle" dominant-baseline="central" font-family="Liberation Sans" font-weight="bold" font-size="11.5" fill="#111">Z</text>
<text transform="translate(1193,256) rotate(-90)" text-anchor="middle" dominant-baseline="central" font-family="Liberation Sans" font-weight="bold" font-size="11.5" fill="#111">Y</text>
<rect x="1440.5" y="108.3" width="49.5" height="267.7" fill="#fff" stroke="#222" stroke-width="1"/>
<text x="1477" y="115.5" text-anchor="middle" dominant-baseline="central" font-family="Liberation Sans" font-size="7.5" fill="#222">Ma</text>
<rect x="1444.3" y="125.41" width="17.3" height="7.00" fill="#d01010" stroke="#333" stroke-width="0.5"/>
<rect x="1444.3" y="132.41" width="17.3" height="12.96" fill="#e83a10" stroke="#333" stroke-width="0.5"/>
<rect x="1444.3" y="145.37" width="17.3" height="13.74" fill="#f06818" stroke="#333" stroke-width="0.5"/>
<rect x="1444.3" y="159.11" width="17.3" height="13.48" fill="#f8a018" stroke="#333" stroke-width="0.5"/>
<rect x="1444.3" y="172.60" width="17.3" height="12.96" fill="#f8d818" stroke="#333" stroke-width="0.5"/>
<rect x="1444.3" y="185.56" width="17.3" height="13.74" fill="#e0e020" stroke="#333" stroke-width="0.5"/>
<rect x="1444.3" y="199.30" width="17.3" height="13.48" fill="#a8d828" stroke="#333" stroke-width="0.5"/>
<rect x="1444.3" y="212.78" width="17.3" height="13.74" fill="#70c828" stroke="#333" stroke-width="0.5"/>
<rect x="1444.3" y="226.52" width="17.3" height="12.96" fill="#38b828" stroke="#333" stroke-width="0.5"/>
<rect x="1444.3" y="239.49" width="17.3" height="13.48" fill="#10b818" stroke="#333" stroke-width="0.5"/>
<rect x="1444.3" y="252.97" width="17.3" height="13.48" fill="#18b838" stroke="#333" stroke-width="0.5"/>
<rect x="1444.3" y="266.45" width="17.3" height="13.22" fill="#18c070" stroke="#333" stroke-width="0.5"/>
<rect x="1444.3" y="279.67" width="17.3" height="13.48" fill="#18c8a8" stroke="#333" stroke-width="0.5"/>
<rect x="1444.3" y="293.16" width="17.3" height="13.48" fill="#18d0d8" stroke="#333" stroke-width="0.5"/>
<rect x="1444.3" y="306.64" width="17.3" height="13.22" fill="#18b8f0" stroke="#333" stroke-width="0.5"/>
<rect x="1444.3" y="319.86" width="17.3" height="13.48" fill="#1888e0" stroke="#333" stroke-width="0.5"/>
<rect x="1444.3" y="333.34" width="17.3" height="13.48" fill="#1858d8" stroke="#333" stroke-width="0.5"/>
<rect x="1444.3" y="346.82" width="17.3" height="12.44" fill="#1838e0" stroke="#333" stroke-width="0.5"/>
<rect x="1444.3" y="359.27" width="17.3" height="8.30" fill="#1010f0" stroke="#333" stroke-width="0.5"/>
<text x="1470" y="133.70" dominant-baseline="central" font-family="Liberation Sans" font-size="11.5" fill="#222">1.8</text>
<text x="1470" y="147.12" dominant-baseline="central" font-family="Liberation Sans" font-size="11.5" fill="#222">1.7</text>
<text x="1470" y="160.54" dominant-baseline="central" font-family="Liberation Sans" font-size="11.5" fill="#222">1.6</text>
<text x="1470" y="173.96" dominant-baseline="central" font-family="Liberation Sans" font-size="11.5" fill="#222">1.5</text>
<text x="1470" y="187.38" dominant-baseline="central" font-family="Liberation Sans" font-size="11.5" fill="#222">1.4</text>
<text x="1470" y="200.80" dominant-baseline="central" font-family="Liberation Sans" font-size="11.5" fill="#222">1.3</text>
<text x="1470" y="214.22" dominant-baseline="central" font-family="Liberation Sans" font-size="11.5" fill="#222">1.2</text>
<text x="1470" y="227.64" dominant-baseline="central" font-family="Liberation Sans" font-size="11.5" fill="#222">1.1</text>
<text x="1470" y="241.06" dominant-baseline="central" font-family="Liberation Sans" font-size="11.5" fill="#222">1</text>
<text x="1470" y="254.48" dominant-baseline="central" font-family="Liberation Sans" font-size="11.5" fill="#222">0.9</text>
<text x="1470" y="267.90" dominant-baseline="central" font-family="Liberation Sans" font-size="11.5" fill="#222">0.8</text>
<text x="1470" y="281.32" dominant-baseline="central" font-family="Liberation Sans" font-size="11.5" fill="#222">0.7</text>
<text x="1470" y="294.74" dominant-baseline="central" font-family="Liberation Sans" font-size="11.5" fill="#222">0.6</text>
<text x="1470" y="308.16" dominant-baseline="central" font-family="Liberation Sans" font-size="11.5" fill="#222">0.5</text>
<text x="1470" y="321.58" dominant-baseline="central" font-family="Liberation Sans" font-size="11.5" fill="#222">0.4</text>
<text x="1470" y="335.00" dominant-baseline="central" font-family="Liberation Sans" font-size="11.5" fill="#222">0.3</text>
<text x="1470" y="348.42" dominant-baseline="central" font-family="Liberation Sans" font-size="11.5" fill="#222">0.2</text>
<text x="1470" y="361.84" dominant-baseline="central" font-family="Liberation Sans" font-size="11.5" fill="#222">0.1</text>
<defs><clipPath id="c4"><rect x="457.4" y="454.3" width="286.3" height="244.9"/></clipPath></defs>
<g clip-path="url(#c4)">
<circle cx="600.1" cy="603.1" r="142.5" fill="#cbcbcb"/>
<path d="M721.90,602.50 L721.60,611.15 L720.71,619.76 L719.22,628.28 L717.15,636.68 L714.51,644.91 L711.31,652.94 L707.56,660.71 L703.29,668.21 L698.50,675.39 L693.24,682.21 L687.52,688.64 L681.37,694.65 L674.82,700.21 L667.90,705.30 L660.65,709.89 L653.10,713.95 L645.29,717.47 L637.25,720.43 L629.04,722.82 L620.67,724.62 L612.20,725.82 L603.68,726.42 L595.09,726.42 L586.49,725.82 L577.95,724.62 L569.52,722.82 L561.24,720.43 L553.14,717.47 L545.26,713.95 L537.65,709.89 L530.34,705.30 L523.37,700.21 L516.76,694.65 L510.56,688.64 L504.79,682.21 L499.49,675.39 L494.67,668.21 L490.36,660.71 L486.58,652.94 L483.35,644.91 L480.68,636.68 L478.60,628.28 L477.10,619.76 L476.20,611.15 L475.90,602.50 L476.20,594.02 L477.10,585.59 L478.60,577.24 L480.68,569.01 L483.35,560.94 L486.58,553.08 L490.36,545.46 L494.67,538.11 L499.49,531.08 L504.79,524.40 L510.56,518.10 L516.76,512.21 L523.37,506.76 L530.34,501.77 L537.65,497.28 L545.26,493.30 L553.14,489.85 L561.24,486.95 L569.52,484.61 L577.95,482.85 L586.49,481.67 L595.09,481.07 L603.68,481.07 L612.20,481.67 L620.67,482.85 L629.04,484.61 L637.25,486.95 L645.29,489.85 L653.10,493.30 L660.65,497.28 L667.90,501.77 L674.82,506.76 L681.37,512.21 L687.52,518.10 L693.24,524.40 L698.50,531.08 L703.29,538.11 L707.56,545.46 L711.31,553.08 L714.51,560.94 L717.15,569.01 L719.22,577.24 L720.71,585.59 L721.60,594.02 Z" fill="none" stroke="#111" stroke-width="1.2" stroke-dasharray="10 0.8"/>
<path d="M703.90,602.50 L703.65,609.89 L702.88,617.25 L701.62,624.54 L699.85,631.72 L697.60,638.75 L694.87,645.61 L691.67,652.26 L688.02,658.67 L683.94,664.81 L679.45,670.64 L674.57,676.13 L669.32,681.27 L663.74,686.03 L657.84,690.38 L651.65,694.30 L645.21,697.77 L638.55,700.78 L631.69,703.31 L624.68,705.35 L617.55,706.89 L610.32,707.92 L603.05,708.44 L595.74,708.44 L588.42,707.92 L581.17,706.89 L574.00,705.35 L566.95,703.31 L560.07,700.78 L553.37,697.77 L546.90,694.30 L540.68,690.38 L534.76,686.03 L529.14,681.27 L523.87,676.13 L518.97,670.64 L514.45,664.81 L510.35,658.67 L506.69,652.26 L503.48,645.61 L500.73,638.75 L498.47,631.72 L496.69,624.54 L495.42,617.25 L494.66,609.89 L494.40,602.50 L494.66,595.21 L495.42,587.96 L496.69,580.77 L498.47,573.70 L500.73,566.76 L503.48,560.00 L506.69,553.44 L510.35,547.12 L514.45,541.08 L518.97,535.33 L523.87,529.91 L529.14,524.84 L534.76,520.15 L540.68,515.87 L546.90,512.00 L553.37,508.58 L560.07,505.61 L566.95,503.11 L574.00,501.10 L581.17,499.59 L588.42,498.57 L595.74,498.06 L603.05,498.06 L610.32,498.57 L617.55,499.59 L624.68,501.10 L631.69,503.11 L638.55,505.61 L645.21,508.58 L651.65,512.00 L657.84,515.87 L663.74,520.15 L669.32,524.84 L674.57,529.91 L679.45,535.33 L683.94,541.08 L688.02,547.12 L691.67,553.44 L694.87,560.00 L697.60,566.76 L699.85,573.70 L701.62,580.77 L702.88,587.96 L703.65,595.21 Z" fill="none" stroke="#111" stroke-width="1.2" stroke-dasharray="10 0.8"/>
<path d="M673.70,602.50 L673.40,607.96 L672.52,613.76 L671.04,619.63 L669.00,625.45 L666.41,631.16 L663.28,636.69 L659.66,642.00 L655.56,647.01 L651.04,651.70 L646.12,656.02 L640.85,659.92 L635.28,663.38 L629.48,666.35 L623.48,668.82 L617.37,670.77 L611.22,672.17 L605.13,673.02 L599.40,673.30 L593.83,673.02 L587.91,672.17 L581.93,670.77 L576.00,668.82 L570.17,666.35 L564.53,663.38 L559.12,659.92 L554.00,656.02 L549.22,651.70 L544.82,647.01 L540.84,642.00 L537.32,636.69 L534.29,631.16 L531.76,625.45 L529.78,619.63 L528.35,613.76 L527.49,607.96 L527.20,602.50 L527.49,597.20 L528.35,591.56 L529.78,585.87 L531.76,580.21 L534.29,574.67 L537.32,569.30 L540.84,564.15 L544.82,559.27 L549.22,554.72 L554.00,550.53 L559.12,546.74 L564.53,543.39 L570.17,540.50 L576.00,538.10 L581.93,536.21 L587.91,534.85 L593.83,534.02 L599.40,533.75 L605.13,534.02 L611.22,534.85 L617.37,536.21 L623.48,538.10 L629.48,540.50 L635.28,543.39 L640.85,546.74 L646.12,550.53 L651.04,554.72 L655.56,559.27 L659.66,564.15 L663.28,569.30 L666.41,574.67 L669.00,580.21 L671.04,585.87 L672.52,591.56 L673.40,597.20 Z" fill="none" stroke="#111" stroke-width="1.2" stroke-dasharray="10 0.8"/>
<path d="M661.90,602.50 L661.64,606.87 L660.88,611.71 L659.60,616.67 L657.84,621.65 L655.60,626.56 L652.91,631.35 L649.79,635.97 L646.27,640.35 L642.39,644.45 L638.18,648.24 L633.69,651.68 L628.96,654.72 L624.05,657.35 L619.02,659.54 L613.92,661.26 L608.83,662.50 L603.88,663.25 L599.40,663.50 L595.03,663.25 L590.19,662.50 L585.23,661.26 L580.25,659.54 L575.34,657.35 L570.55,654.72 L565.93,651.68 L561.55,648.24 L557.45,644.45 L553.66,640.35 L550.22,635.97 L547.18,631.35 L544.55,626.56 L542.36,621.65 L540.64,616.67 L539.40,611.71 L538.65,606.87 L538.40,602.50 L538.65,598.27 L539.40,593.59 L540.64,588.79 L542.36,583.98 L544.55,579.23 L547.18,574.59 L550.22,570.13 L553.66,565.89 L557.45,561.92 L561.55,558.26 L565.93,554.94 L570.55,551.99 L575.34,549.45 L580.25,547.33 L585.23,545.67 L590.19,544.47 L595.03,543.74 L599.40,543.50 L603.88,543.74 L608.83,544.47 L613.92,545.67 L619.02,547.33 L624.05,549.45 L628.96,551.99 L633.69,554.94 L638.18,558.26 L642.39,561.92 L646.27,565.89 L649.79,570.13 L652.91,574.59 L655.60,579.23 L657.84,583.98 L659.60,588.79 L660.88,593.59 L661.64,598.27 Z" fill="none" stroke="#111" stroke-width="1.2" stroke-dasharray="10 0.8"/>
<path d="M654.90,602.50 L654.67,606.15 L653.97,610.30 L652.82,614.60 L651.23,618.94 L649.21,623.24 L646.78,627.46 L643.97,631.53 L640.80,635.40 L637.31,639.04 L633.53,642.41 L629.51,645.46 L625.29,648.17 L620.92,650.51 L616.45,652.46 L611.95,654.00 L607.49,655.11 L603.19,655.78 L599.40,656.00 L595.71,655.78 L591.53,655.11 L587.19,654.00 L582.81,652.46 L578.46,650.51 L574.21,648.17 L570.10,645.46 L566.19,642.41 L562.52,639.04 L559.12,635.40 L556.04,631.53 L553.30,627.46 L550.94,623.24 L548.97,618.94 L547.42,614.60 L546.30,610.30 L545.63,606.15 L545.40,602.50 L545.63,598.95 L546.30,594.92 L547.42,590.74 L548.97,586.52 L550.94,582.34 L553.30,578.24 L556.04,574.29 L559.12,570.52 L562.52,566.98 L566.19,563.71 L570.10,560.75 L574.21,558.11 L578.46,555.83 L582.81,553.94 L587.19,552.45 L591.53,551.37 L595.71,550.72 L599.40,550.50 L603.19,550.72 L607.49,551.37 L611.95,552.45 L616.45,553.94 L620.92,555.83 L625.29,558.11 L629.51,560.75 L633.53,563.71 L637.31,566.98 L640.80,570.52 L643.97,574.29 L646.78,578.24 L649.21,582.34 L651.23,586.52 L652.82,590.74 L653.97,594.92 L654.67,598.95 Z" fill="none" stroke="#111" stroke-width="1.2" stroke-dasharray="10 0.8"/>
<path d="M650.40,602.50 L650.18,605.65 L649.53,609.33 L648.46,613.17 L646.97,617.08 L645.08,620.98 L642.81,624.81 L640.19,628.52 L637.24,632.06 L633.99,635.40 L630.49,638.48 L626.76,641.29 L622.86,643.78 L618.84,645.94 L614.74,647.74 L610.62,649.15 L606.58,650.18 L602.72,650.79 L599.40,651.00 L596.19,650.79 L592.46,650.18 L588.55,649.15 L584.58,647.74 L580.61,645.94 L576.72,643.78 L572.95,641.29 L569.35,638.48 L565.96,635.40 L562.82,632.06 L559.97,628.52 L557.44,624.81 L555.24,620.98 L553.42,617.08 L551.98,613.17 L550.94,609.33 L550.31,605.65 L550.10,602.50 L550.31,599.43 L550.94,595.86 L551.98,592.11 L553.42,588.31 L555.24,584.51 L557.44,580.78 L559.97,577.17 L562.82,573.73 L565.96,570.48 L569.35,567.48 L572.95,564.75 L576.72,562.32 L580.61,560.22 L584.58,558.48 L588.55,557.10 L592.46,556.10 L596.19,555.50 L599.40,555.30 L602.72,555.50 L606.58,556.10 L610.62,557.10 L614.74,558.48 L618.84,560.22 L622.86,562.32 L626.76,564.75 L630.49,567.48 L633.99,570.48 L637.24,573.73 L640.19,577.17 L642.81,580.78 L645.08,584.51 L646.97,588.31 L648.46,592.11 L649.53,595.86 L650.18,599.43 Z" fill="none" stroke="#111" stroke-width="1.2" stroke-dasharray="10 0.8"/>
<path d="M646.90,602.50 L646.69,605.19 L646.07,608.44 L645.04,611.90 L643.62,615.46 L641.82,619.03 L639.66,622.55 L637.16,625.98 L634.36,629.27 L631.29,632.37 L627.97,635.25 L624.47,637.88 L620.80,640.22 L617.04,642.24 L613.23,643.93 L609.44,645.26 L605.74,646.22 L602.27,646.81 L599.40,647.00 L596.63,646.81 L593.28,646.22 L589.72,645.26 L586.06,643.93 L582.39,642.24 L578.76,640.22 L575.23,637.88 L571.85,635.25 L568.66,632.37 L565.69,629.27 L562.99,625.98 L560.58,622.55 L558.50,619.03 L556.76,615.46 L555.39,611.90 L554.40,608.44 L553.80,605.19 L553.60,602.50 L553.80,599.90 L554.40,596.76 L555.39,593.41 L556.76,589.98 L558.50,586.53 L560.58,583.12 L562.99,579.81 L565.69,576.63 L568.66,573.63 L571.85,570.85 L575.23,568.31 L578.76,566.06 L582.39,564.10 L586.06,562.47 L589.72,561.18 L593.28,560.25 L596.63,559.69 L599.40,559.50 L602.27,559.69 L605.74,560.25 L609.44,561.18 L613.23,562.47 L617.04,564.10 L620.80,566.06 L624.47,568.31 L627.97,570.85 L631.29,573.63 L634.36,576.63 L637.16,579.81 L639.66,583.12 L641.82,586.53 L643.62,589.98 L645.04,593.41 L646.07,596.76 L646.69,599.90 Z" fill="none" stroke="#111" stroke-width="1.2" stroke-dasharray="10 0.8"/>
<path d="M643.40,602.50 L643.20,604.78 L642.61,607.63 L641.64,610.72 L640.29,613.92 L638.58,617.16 L636.53,620.37 L634.17,623.52 L631.53,626.54 L628.63,629.41 L625.52,632.07 L622.23,634.51 L618.82,636.68 L615.32,638.56 L611.81,640.13 L608.33,641.38 L604.98,642.27 L601.87,642.82 L599.40,643.00 L597.02,642.82 L594.03,642.27 L590.80,641.38 L587.45,640.13 L584.05,638.56 L580.69,636.68 L577.40,634.51 L574.23,632.07 L571.23,629.41 L568.44,626.54 L565.89,623.52 L563.62,620.37 L561.65,617.16 L560.00,613.92 L558.70,610.72 L557.76,607.63 L557.19,604.78 L557.00,602.50 L557.19,600.31 L557.76,597.57 L558.70,594.61 L560.00,591.53 L561.65,588.42 L563.62,585.33 L565.89,582.31 L568.44,579.41 L571.23,576.66 L574.23,574.10 L577.40,571.76 L580.69,569.67 L584.05,567.86 L587.45,566.35 L590.80,565.16 L594.03,564.30 L597.02,563.77 L599.40,563.60 L601.87,563.77 L604.98,564.30 L608.33,565.16 L611.81,566.35 L615.32,567.86 L618.82,569.67 L622.23,571.76 L625.52,574.10 L628.63,576.66 L631.53,579.41 L634.17,582.31 L636.53,585.33 L638.58,588.42 L640.29,591.53 L641.64,594.61 L642.61,597.57 L643.20,600.31 Z" fill="none" stroke="#111" stroke-width="1.2" stroke-dasharray="10 0.8"/>
<path d="M639.90,602.50 L639.72,604.43 L639.16,606.90 L638.25,609.61 L636.99,612.43 L635.39,615.31 L633.48,618.17 L631.28,620.98 L628.81,623.68 L626.12,626.25 L623.23,628.65 L620.19,630.84 L617.03,632.79 L613.81,634.49 L610.58,635.91 L607.40,637.03 L604.36,637.84 L601.57,638.34 L599.40,638.50 L597.32,638.34 L594.64,637.84 L591.72,637.03 L588.66,635.91 L585.56,634.49 L582.47,632.79 L579.44,630.84 L576.51,628.65 L573.74,626.25 L571.15,623.68 L568.78,620.98 L566.67,618.17 L564.83,615.31 L563.30,612.43 L562.09,609.61 L561.21,606.90 L560.68,604.43 L560.50,602.50 L560.68,600.64 L561.21,598.25 L562.09,595.65 L563.30,592.92 L564.83,590.16 L566.67,587.40 L568.78,584.69 L571.15,582.08 L573.74,579.61 L576.51,577.30 L579.44,575.19 L582.47,573.30 L585.56,571.66 L588.66,570.30 L591.72,569.21 L594.64,568.43 L597.32,567.96 L599.40,567.80 L601.57,567.96 L604.36,568.43 L607.40,569.21 L610.58,570.30 L613.81,571.66 L617.03,573.30 L620.19,575.19 L623.23,577.30 L626.12,579.61 L628.81,582.08 L631.28,584.69 L633.48,587.40 L635.39,590.16 L636.99,592.92 L638.25,595.65 L639.16,598.25 L639.72,600.64 Z" fill="none" stroke="#111" stroke-width="1.2" stroke-dasharray="10 0.8"/>
<path d="M636.40,602.50 L636.23,604.16 L635.72,606.34 L634.87,608.75 L633.70,611.28 L632.22,613.86 L630.44,616.45 L628.41,619.00 L626.13,621.46 L623.64,623.79 L620.98,625.98 L618.18,627.98 L615.28,629.77 L612.34,631.32 L609.39,632.62 L606.51,633.65 L603.77,634.40 L601.29,634.85 L599.40,635.00 L597.60,634.85 L595.22,634.40 L592.59,633.65 L589.84,632.62 L587.02,631.32 L584.20,629.77 L581.43,627.98 L578.75,625.98 L576.21,623.79 L573.83,621.46 L571.65,619.00 L569.70,616.45 L568.00,613.86 L566.59,611.28 L565.47,608.75 L564.66,606.34 L564.16,604.16 L564.00,602.50 L564.16,600.91 L564.66,598.81 L565.47,596.49 L566.59,594.06 L568.00,591.57 L569.70,589.08 L571.65,586.64 L573.83,584.27 L576.21,582.03 L578.75,579.92 L581.43,578.00 L584.20,576.28 L587.02,574.78 L589.84,573.53 L592.59,572.54 L595.22,571.83 L597.60,571.40 L599.40,571.25 L601.29,571.40 L603.77,571.83 L606.51,572.54 L609.39,573.53 L612.34,574.78 L615.28,576.28 L618.18,578.00 L620.98,579.92 L623.64,582.03 L626.13,584.27 L628.41,586.64 L630.44,589.08 L632.22,591.57 L633.70,594.06 L634.87,596.49 L635.72,598.81 L636.23,600.91 Z" fill="none" stroke="#111" stroke-width="1.2" stroke-dasharray="10 0.8"/>
<path d="M632.90,602.50 L632.74,603.85 L632.27,605.69 L631.48,607.76 L630.39,609.95 L629.02,612.21 L627.39,614.48 L625.51,616.73 L623.41,618.90 L621.12,620.98 L618.68,622.93 L616.12,624.71 L613.49,626.31 L610.82,627.70 L608.16,628.87 L605.58,629.79 L603.16,630.46 L600.99,630.86 L599.40,631.00 L597.88,630.86 L595.81,630.46 L593.49,629.79 L591.03,628.87 L588.50,627.70 L585.95,626.31 L583.43,624.71 L580.98,622.93 L578.65,620.98 L576.47,618.90 L574.46,616.73 L572.67,614.48 L571.10,612.21 L569.79,609.95 L568.76,607.76 L568.01,605.69 L567.55,603.85 L567.40,602.50 L567.55,601.22 L568.01,599.47 L568.76,597.52 L569.79,595.44 L571.10,593.30 L572.67,591.15 L574.46,589.02 L576.47,586.96 L578.65,584.99 L580.98,583.15 L583.43,581.46 L585.95,579.94 L588.50,578.62 L591.03,577.52 L593.49,576.65 L595.81,576.01 L597.88,575.63 L599.40,575.50 L600.99,575.63 L603.16,576.01 L605.58,576.65 L608.16,577.52 L610.82,578.62 L613.49,579.94 L616.12,581.46 L618.68,583.15 L621.12,584.99 L623.41,586.96 L625.51,589.02 L627.39,591.15 L629.02,593.30 L630.39,595.44 L631.48,597.52 L632.27,599.47 L632.74,601.22 Z" fill="none" stroke="#111" stroke-width="1.2" stroke-dasharray="10 0.8"/>
<path d="M629.40,602.50 L629.25,603.60 L628.82,605.16 L628.10,606.93 L627.10,608.83 L625.85,610.80 L624.36,612.79 L622.64,614.77 L620.73,616.70 L618.65,618.54 L616.44,620.27 L614.13,621.87 L611.75,623.30 L609.36,624.54 L607.00,625.59 L604.72,626.41 L602.59,627.01 L600.72,627.38 L599.40,627.50 L598.15,627.38 L596.37,627.01 L594.35,626.41 L592.18,625.59 L589.94,624.54 L587.66,623.30 L585.41,621.87 L583.21,620.27 L581.11,618.54 L579.14,616.70 L577.32,614.77 L575.69,612.79 L574.27,610.80 L573.08,608.83 L572.14,606.93 L571.45,605.16 L571.04,603.60 L570.90,602.50 L571.04,601.46 L571.45,599.99 L572.14,598.32 L573.08,596.52 L574.27,594.66 L575.69,592.78 L577.32,590.91 L579.14,589.10 L581.11,587.36 L583.21,585.72 L585.41,584.22 L587.66,582.87 L589.94,581.69 L592.18,580.71 L594.35,579.92 L596.37,579.36 L598.15,579.01 L599.40,578.90 L600.72,579.01 L602.59,579.36 L604.72,579.92 L607.00,580.71 L609.36,581.69 L611.75,582.87 L614.13,584.22 L616.44,585.72 L618.65,587.36 L620.73,589.10 L622.64,590.91 L624.36,592.78 L625.85,594.66 L627.10,596.52 L628.10,598.32 L628.82,599.99 L629.25,601.46 Z" fill="none" stroke="#111" stroke-width="1.2" stroke-dasharray="10 0.8"/>
<path d="M625.90,602.50 L625.77,603.38 L625.38,604.66 L624.73,606.12 L623.84,607.71 L622.72,609.35 L621.38,611.03 L619.85,612.70 L618.14,614.32 L616.29,615.88 L614.32,617.35 L612.27,618.70 L610.16,619.92 L608.05,620.98 L605.97,621.87 L603.97,622.57 L602.12,623.09 L600.51,623.40 L599.40,623.50 L598.35,623.40 L596.83,623.09 L595.09,622.57 L593.20,621.87 L591.24,620.98 L589.25,619.92 L587.26,618.70 L585.33,617.35 L583.47,615.88 L581.72,614.32 L580.11,612.70 L578.66,611.03 L577.40,609.35 L576.34,607.71 L575.50,606.12 L574.89,604.66 L574.52,603.38 L574.40,602.50 L574.52,601.66 L574.89,600.45 L575.50,599.05 L576.34,597.54 L577.40,595.97 L578.66,594.38 L580.11,592.79 L581.72,591.24 L583.47,589.75 L585.33,588.36 L587.26,587.07 L589.25,585.91 L591.24,584.90 L593.20,584.05 L595.09,583.38 L596.83,582.89 L598.35,582.60 L599.40,582.50 L600.51,582.60 L602.12,582.89 L603.97,583.38 L605.97,584.05 L608.05,584.90 L610.16,585.91 L612.27,587.07 L614.32,588.36 L616.29,589.75 L618.14,591.24 L619.85,592.79 L621.38,594.38 L622.72,595.97 L623.84,597.54 L624.73,599.05 L625.38,600.45 L625.77,601.66 Z" fill="none" stroke="#111" stroke-width="1.2" stroke-dasharray="10 0.8"/>
<path d="M622.40,602.50 L622.28,603.20 L621.94,604.24 L621.37,605.44 L620.59,606.75 L619.60,608.11 L618.42,609.51 L617.08,610.90 L615.58,612.27 L613.96,613.58 L612.23,614.81 L610.44,615.95 L608.61,616.97 L606.78,617.87 L604.98,618.62 L603.26,619.22 L601.68,619.65 L600.32,619.91 L599.40,620.00 L598.54,619.91 L597.27,619.65 L595.79,619.22 L594.18,618.62 L592.50,617.87 L590.79,616.97 L589.08,615.95 L587.40,614.81 L585.79,613.58 L584.28,612.27 L582.88,610.90 L581.62,609.51 L580.52,608.11 L579.59,606.75 L578.86,605.44 L578.33,604.24 L578.01,603.20 L577.90,602.50 L578.01,601.83 L578.33,600.84 L578.86,599.70 L579.59,598.45 L580.52,597.14 L581.62,595.81 L582.88,594.48 L584.28,593.18 L585.79,591.93 L587.40,590.75 L589.08,589.67 L590.79,588.69 L592.50,587.83 L594.18,587.12 L595.79,586.55 L597.27,586.13 L598.54,585.88 L599.40,585.80 L600.32,585.88 L601.68,586.13 L603.26,586.55 L604.98,587.12 L606.78,587.83 L608.61,588.69 L610.44,589.67 L612.23,590.75 L613.96,591.93 L615.58,593.18 L617.08,594.48 L618.42,595.81 L619.60,597.14 L620.59,598.45 L621.37,599.70 L621.94,600.84 L622.28,601.83 Z" fill="none" stroke="#111" stroke-width="1.2" stroke-dasharray="10 0.8"/>
<path d="M618.90,602.50 L618.80,603.00 L618.50,603.77 L618.01,604.68 L617.33,605.67 L616.47,606.72 L615.46,607.80 L614.30,608.87 L613.01,609.93 L611.61,610.96 L610.14,611.92 L608.61,612.81 L607.05,613.62 L605.50,614.32 L603.98,614.91 L602.54,615.38 L601.23,615.72 L600.12,615.93 L599.40,616.00 L598.73,615.93 L597.71,615.72 L596.50,615.38 L595.17,614.91 L593.77,614.32 L592.34,613.62 L590.90,612.81 L589.49,611.92 L588.13,610.96 L586.84,609.93 L585.65,608.87 L584.58,607.80 L583.64,606.72 L582.85,605.67 L582.22,604.68 L581.77,603.77 L581.49,603.00 L581.40,602.50 L581.49,602.04 L581.77,601.32 L582.22,600.48 L582.85,599.56 L583.64,598.59 L584.58,597.60 L585.65,596.60 L586.84,595.62 L588.13,594.67 L589.49,593.78 L590.90,592.95 L592.34,592.21 L593.77,591.55 L595.17,591.01 L596.50,590.57 L597.71,590.26 L598.73,590.06 L599.40,590.00 L600.12,590.06 L601.23,590.26 L602.54,590.57 L603.98,591.01 L605.50,591.55 L607.05,592.21 L608.61,592.95 L610.14,593.78 L611.61,594.67 L613.01,595.62 L614.30,596.60 L615.46,597.60 L616.47,598.59 L617.33,599.56 L618.01,600.48 L618.50,601.32 L618.80,602.04 Z" fill="none" stroke="#111" stroke-width="1.2" stroke-dasharray="10 0.8"/>
<path d="M611.40,602.50 L611.33,602.67 L611.11,603.00 L610.75,603.44 L610.26,603.97 L609.65,604.57 L608.93,605.20 L608.12,605.87 L607.23,606.54 L606.29,607.21 L605.32,607.85 L604.33,608.46 L603.36,609.01 L602.42,609.51 L601.56,609.92 L600.78,610.26 L600.13,610.50 L599.64,610.65 L599.40,610.70 L599.18,610.65 L598.73,610.50 L598.13,610.26 L597.42,609.92 L596.63,609.51 L595.77,609.01 L594.88,608.46 L593.98,607.85 L593.08,607.21 L592.22,606.54 L591.41,605.87 L590.66,605.20 L590.00,604.57 L589.44,603.97 L588.99,603.44 L588.67,603.00 L588.47,602.67 L588.40,602.50 L588.47,602.35 L588.67,602.04 L588.99,601.63 L589.44,601.13 L590.00,600.58 L590.66,599.99 L591.41,599.38 L592.22,598.75 L593.08,598.13 L593.98,597.54 L594.88,596.98 L595.77,596.46 L596.63,596.01 L597.42,595.62 L598.13,595.31 L598.73,595.08 L599.18,594.95 L599.40,594.90 L599.64,594.95 L600.13,595.08 L600.78,595.31 L601.56,595.62 L602.42,596.01 L603.36,596.46 L604.33,596.98 L605.32,597.54 L606.29,598.13 L607.23,598.75 L608.12,599.38 L608.93,599.99 L609.65,600.58 L610.26,601.13 L610.75,601.63 L611.11,602.04 L611.33,602.35 Z" fill="none" stroke="#111" stroke-width="1.2" stroke-dasharray="10 0.8"/>
<path d="M606.20,602.50 L606.16,602.58 L606.03,602.77 L605.81,603.02 L605.52,603.34 L605.15,603.70 L604.72,604.10 L604.24,604.52 L603.72,604.95 L603.17,605.38 L602.61,605.81 L602.04,606.20 L601.49,606.57 L600.97,606.90 L600.50,607.18 L600.08,607.40 L599.75,607.57 L599.51,607.67 L599.40,607.70 L599.30,607.67 L599.08,607.57 L598.77,607.40 L598.39,607.18 L597.95,606.90 L597.48,606.57 L596.97,606.20 L596.45,605.81 L595.93,605.38 L595.43,604.95 L594.95,604.52 L594.51,604.10 L594.11,603.70 L593.78,603.34 L593.51,603.02 L593.31,602.77 L593.19,602.58 L593.15,602.50 L593.19,602.42 L593.31,602.25 L593.51,602.01 L593.78,601.71 L594.11,601.37 L594.51,600.99 L594.95,600.60 L595.43,600.19 L595.93,599.78 L596.45,599.39 L596.97,599.01 L597.48,598.66 L597.95,598.35 L598.39,598.09 L598.77,597.88 L599.08,597.73 L599.30,597.63 L599.40,597.60 L599.51,597.63 L599.75,597.73 L600.08,597.88 L600.50,598.09 L600.97,598.35 L601.49,598.66 L602.04,599.01 L602.61,599.39 L603.17,599.78 L603.72,600.19 L604.24,600.60 L604.72,600.99 L605.15,601.37 L605.52,601.71 L605.81,602.01 L606.03,602.25 L606.16,602.42 Z" fill="none" stroke="#111" stroke-width="1.2" stroke-dasharray="10 0.8"/>
</g>
<line x1="457.4" y1="454.3" x2="457.4" y2="699.2" stroke="#111" stroke-width="1.2"/>
<line x1="457.4" y1="692.60" x2="460.7" y2="692.60" stroke="#111" stroke-width="1.2"/>
<line x1="457.4" y1="683.65" x2="460.7" y2="683.65" stroke="#111" stroke-width="1.2"/>
<line x1="457.4" y1="674.70" x2="462.7" y2="674.70" stroke="#111" stroke-width="1.2"/>
<text x="453.4" y="675.30" text-anchor="end" dominant-baseline="central" font-family="Liberation Sans" font-size="9.8" fill="#1a1a1a">-0.4</text>
<line x1="457.4" y1="665.75" x2="460.7" y2="665.75" stroke="#111" stroke-width="1.2"/>
<line x1="457.4" y1="656.80" x2="460.7" y2="656.80" stroke="#111" stroke-width="1.2"/>
<line x1="457.4" y1="647.85" x2="460.7" y2="647.85" stroke="#111" stroke-width="1.2"/>
<line x1="457.4" y1="638.90" x2="462.7" y2="638.90" stroke="#111" stroke-width="1.2"/>
<text x="453.4" y="639.50" text-anchor="end" dominant-baseline="central" font-family="Liberation Sans" font-size="9.8" fill="#1a1a1a">-0.2</text>
<line x1="457.4" y1="629.95" x2="460.7" y2="629.95" stroke="#111" stroke-width="1.2"/>
<line x1="457.4" y1="621.00" x2="460.7" y2="621.00" stroke="#111" stroke-width="1.2"/>
<line x1="457.4" y1="612.05" x2="460.7" y2="612.05" stroke="#111" stroke-width="1.2"/>
<line x1="457.4" y1="603.10" x2="462.7" y2="603.10" stroke="#111" stroke-width="1.2"/>
<text x="453.4" y="603.70" text-anchor="end" dominant-baseline="central" font-family="Liberation Sans" font-size="9.8" fill="#1a1a1a">0</text>
<line x1="457.4" y1="594.15" x2="460.7" y2="594.15" stroke="#111" stroke-width="1.2"/>
<line x1="457.4" y1="585.20" x2="460.7" y2="585.20" stroke="#111" stroke-width="1.2"/>
<line x1="457.4" y1="576.25" x2="460.7" y2="576.25" stroke="#111" stroke-width="1.2"/>
<line x1="457.4" y1="567.30" x2="462.7" y2="567.30" stroke="#111" stroke-width="1.2"/>
<text x="453.4" y="567.90" text-anchor="end" dominant-baseline="central" font-family="Liberation Sans" font-size="9.8" fill="#1a1a1a">0.2</text>
<line x1="457.4" y1="558.35" x2="460.7" y2="558.35" stroke="#111" stroke-width="1.2"/>
<line x1="457.4" y1="549.40" x2="460.7" y2="549.40" stroke="#111" stroke-width="1.2"/>
<line x1="457.4" y1="540.45" x2="460.7" y2="540.45" stroke="#111" stroke-width="1.2"/>
<line x1="457.4" y1="531.50" x2="462.7" y2="531.50" stroke="#111" stroke-width="1.2"/>
<text x="453.4" y="532.10" text-anchor="end" dominant-baseline="central" font-family="Liberation Sans" font-size="9.8" fill="#1a1a1a">0.4</text>
<line x1="457.4" y1="522.55" x2="460.7" y2="522.55" stroke="#111" stroke-width="1.2"/>
<line x1="457.4" y1="513.60" x2="460.7" y2="513.60" stroke="#111" stroke-width="1.2"/>
<line x1="457.4" y1="504.65" x2="460.7" y2="504.65" stroke="#111" stroke-width="1.2"/>
<line x1="457.4" y1="495.70" x2="462.7" y2="495.70" stroke="#111" stroke-width="1.2"/>
<text x="453.4" y="496.30" text-anchor="end" dominant-baseline="central" font-family="Liberation Sans" font-size="9.8" fill="#1a1a1a">0.6</text>
<line x1="457.4" y1="486.75" x2="460.7" y2="486.75" stroke="#111" stroke-width="1.2"/>
<line x1="457.4" y1="477.80" x2="460.7" y2="477.80" stroke="#111" stroke-width="1.2"/>
<line x1="457.4" y1="468.85" x2="460.7" y2="468.85" stroke="#111" stroke-width="1.2"/>
<line x1="457.4" y1="459.90" x2="462.7" y2="459.90" stroke="#111" stroke-width="1.2"/>
<text x="453.4" y="460.50" text-anchor="end" dominant-baseline="central" font-family="Liberation Sans" font-size="9.8" fill="#1a1a1a">0.8</text>
<line x1="457.4" y1="699.2" x2="743.7" y2="699.2" stroke="#111" stroke-width="1.2"/>
<line x1="456.90" y1="699.2" x2="456.90" y2="695.9000000000001" stroke="#111" stroke-width="1.2"/>
<line x1="474.80" y1="699.2" x2="474.80" y2="695.9000000000001" stroke="#111" stroke-width="1.2"/>
<line x1="492.70" y1="699.2" x2="492.70" y2="695.9000000000001" stroke="#111" stroke-width="1.2"/>
<line x1="510.60" y1="699.2" x2="510.60" y2="693.9000000000001" stroke="#111" stroke-width="1.2"/>
<text x="510.60" y="707.0" text-anchor="middle" dominant-baseline="central" font-family="Liberation Sans" font-size="9.8" fill="#1a1a1a">-0.5</text>
<line x1="528.50" y1="699.2" x2="528.50" y2="695.9000000000001" stroke="#111" stroke-width="1.2"/>
<line x1="546.40" y1="699.2" x2="546.40" y2="695.9000000000001" stroke="#111" stroke-width="1.2"/>
<line x1="564.30" y1="699.2" x2="564.30" y2="695.9000000000001" stroke="#111" stroke-width="1.2"/>
<line x1="582.20" y1="699.2" x2="582.20" y2="695.9000000000001" stroke="#111" stroke-width="1.2"/>
<line x1="600.10" y1="699.2" x2="600.10" y2="693.9000000000001" stroke="#111" stroke-width="1.2"/>
<text x="600.10" y="707.0" text-anchor="middle" dominant-baseline="central" font-family="Liberation Sans" font-size="9.8" fill="#1a1a1a">0</text>
<line x1="618.00" y1="699.2" x2="618.00" y2="695.9000000000001" stroke="#111" stroke-width="1.2"/>
<line x1="635.90" y1="699.2" x2="635.90" y2="695.9000000000001" stroke="#111" stroke-width="1.2"/>
<line x1="653.80" y1="699.2" x2="653.80" y2="695.9000000000001" stroke="#111" stroke-width="1.2"/>
<line x1="671.70" y1="699.2" x2="671.70" y2="695.9000000000001" stroke="#111" stroke-width="1.2"/>
<line x1="689.60" y1="699.2" x2="689.60" y2="693.9000000000001" stroke="#111" stroke-width="1.2"/>
<text x="689.60" y="707.0" text-anchor="middle" dominant-baseline="central" font-family="Liberation Sans" font-size="9.8" fill="#1a1a1a">0.5</text>
<line x1="707.50" y1="699.2" x2="707.50" y2="695.9000000000001" stroke="#111" stroke-width="1.2"/>
<line x1="725.40" y1="699.2" x2="725.40" y2="695.9000000000001" stroke="#111" stroke-width="1.2"/>
<line x1="743.30" y1="699.2" x2="743.30" y2="695.9000000000001" stroke="#111" stroke-width="1.2"/>
<text x="600.1" y="716" text-anchor="middle" dominant-baseline="central" font-family="Liberation Sans" font-weight="bold" font-size="11.5" fill="#111">X</text>
<text transform="translate(431,576) rotate(-90)" text-anchor="middle" dominant-baseline="central" font-family="Liberation Sans" font-weight="bold" font-size="11.5" fill="#111">Z</text>
<rect x="724.5" y="430.5" width="49.8" height="185.7" fill="none" stroke="#222" stroke-width="1"/>
<text x="734" y="438.5" dominant-baseline="central" font-family="Liberation Sans" font-size="7.5" fill="#222">Level</text>
<text x="761" y="438.5" dominant-baseline="central" font-family="Liberation Sans" font-size="7.5" fill="#222">V</text>
<text x="734.5" y="450.60" dominant-baseline="central" font-family="Liberation Sans" font-size="8" fill="#222">17</text>
<text x="757" y="450.60" dominant-baseline="central" font-family="Liberation Sans" font-size="8" fill="#222">170</text>
<text x="734.5" y="460.19" dominant-baseline="central" font-family="Liberation Sans" font-size="8" fill="#222">16</text>
<text x="757" y="460.19" dominant-baseline="central" font-family="Liberation Sans" font-size="8" fill="#222">160</text>
<text x="734.5" y="469.78" dominant-baseline="central" font-family="Liberation Sans" font-size="8" fill="#222">15</text>
<text x="757" y="469.78" dominant-baseline="central" font-family="Liberation Sans" font-size="8" fill="#222">150</text>
<text x="734.5" y="479.37" dominant-baseline="central" font-family="Liberation Sans" font-size="8" fill="#222">14</text>
<text x="757" y="479.37" dominant-baseline="central" font-family="Liberation Sans" font-size="8" fill="#222">140</text>
<text x="734.5" y="488.96" dominant-baseline="central" font-family="Liberation Sans" font-size="8" fill="#222">13</text>
<text x="757" y="488.96" dominant-baseline="central" font-family="Liberation Sans" font-size="8" fill="#222">130</text>
<text x="734.5" y="498.55" dominant-baseline="central" font-family="Liberation Sans" font-size="8" fill="#222">12</text>
<text x="757" y="498.55" dominant-baseline="central" font-family="Liberation Sans" font-size="8" fill="#222">120</text>
<text x="734.5" y="508.14" dominant-baseline="central" font-family="Liberation Sans" font-size="8" fill="#222">11</text>
<text x="757" y="508.14" dominant-baseline="central" font-family="Liberation Sans" font-size="8" fill="#222">110</text>
<text x="734.5" y="517.73" dominant-baseline="central" font-family="Liberation Sans" font-size="8" fill="#222">10</text>
<text x="757" y="517.73" dominant-baseline="central" font-family="Liberation Sans" font-size="8" fill="#222">100</text>
<text x="734.5" y="527.32" dominant-baseline="central" font-family="Liberation Sans" font-size="8" fill="#222">9</text>
<text x="757" y="527.32" dominant-baseline="central" font-family="Liberation Sans" font-size="8" fill="#222">90</text>
<text x="734.5" y="536.91" dominant-baseline="central" font-family="Liberation Sans" font-size="8" fill="#222">8</text>
<text x="757" y="536.91" dominant-baseline="central" font-family="Liberation Sans" font-size="8" fill="#222">80</text>
<text x="734.5" y="546.50" dominant-baseline="central" font-family="Liberation Sans" font-size="8" fill="#222">7</text>
<text x="757" y="546.50" dominant-baseline="central" font-family="Liberation Sans" font-size="8" fill="#222">70</text>
<text x="734.5" y="556.09" dominant-baseline="central" font-family="Liberation Sans" font-size="8" fill="#222">6</text>
<text x="757" y="556.09" dominant-baseline="central" font-family="Liberation Sans" font-size="8" fill="#222">60</text>
<text x="734.5" y="565.68" dominant-baseline="central" font-family="Liberation Sans" font-size="8" fill="#222">5</text>
<text x="757" y="565.68" dominant-baseline="central" font-family="Liberation Sans" font-size="8" fill="#222">50</text>
<text x="734.5" y="575.27" dominant-baseline="central" font-family="Liberation Sans" font-size="8" fill="#222">4</text>
<text x="757" y="575.27" dominant-baseline="central" font-family="Liberation Sans" font-size="8" fill="#222">40</text>
<text x="734.5" y="584.86" dominant-baseline="central" font-family="Liberation Sans" font-size="8" fill="#222">3</text>
<text x="757" y="584.86" dominant-baseline="central" font-family="Liberation Sans" font-size="8" fill="#222">30</text>
<text x="734.5" y="594.45" dominant-baseline="central" font-family="Liberation Sans" font-size="8" fill="#222">2</text>
<text x="757" y="594.45" dominant-baseline="central" font-family="Liberation Sans" font-size="8" fill="#222">20</text>
<text x="734.5" y="604.04" dominant-baseline="central" font-family="Liberation Sans" font-size="8" fill="#222">1</text>
<text x="757" y="604.04" dominant-baseline="central" font-family="Liberation Sans" font-size="8" fill="#222">10</text>
<defs><clipPath id="c5"><rect x="839.5" y="454.3" width="286.2" height="244.9"/></clipPath></defs>
<g clip-path="url(#c5)">
<circle cx="982.7" cy="571.0" r="143" fill="#1890e6"/>
<path d="M1091.41,571.00 L1090.65,581.53 L1088.19,591.79 L1085.18,601.82 L1082.19,611.87 L1077.35,621.22 L1072.67,630.73 L1065.25,638.42 L1058.38,646.46 L1050.61,653.70 L1042.43,660.65 L1032.62,665.18 L1022.68,669.13 L1012.98,673.80 L1002.42,676.02 L991.67,676.62 L981.00,678.83 L970.19,678.49 L959.58,676.50 L949.05,674.16 L939.48,669.20 L929.33,665.69 L919.86,660.63 L911.55,653.90 L903.98,646.45 L897.55,638.09 L890.51,630.23 L884.61,621.47 L879.30,612.27 L875.53,602.34 L874.15,591.82 L871.57,581.56 L872.63,571.00 L871.73,560.51 L873.97,550.24 L877.91,540.51 L879.77,530.12 L885.10,521.02 L889.66,511.50 L896.40,503.31 L904.85,496.75 L911.86,488.86 L919.91,481.86 L929.93,477.85 L939.46,473.23 L949.08,468.40 L959.89,467.54 L970.30,465.07 L981.00,465.39 L991.85,464.05 L1002.52,466.01 L1012.75,469.43 L1022.48,473.80 L1032.40,477.68 L1041.85,482.62 L1051.19,487.99 L1057.70,496.56 L1065.75,503.50 L1072.50,511.66 L1077.68,520.85 L1082.93,530.02 L1085.89,540.12 L1089.59,550.04 L1090.24,560.56 Z" fill="#1a5ce0" stroke="#1a1a2a" stroke-width="0.9"/>
<path d="M1075.96,571.00 L1077.13,580.23 L1075.55,589.34 L1072.14,597.96 L1069.50,606.75 L1065.39,614.98 L1060.94,623.09 L1055.57,630.67 L1048.08,636.41 L1041.09,642.40 L1034.65,649.30 L1026.09,653.25 L1017.89,657.85 L1008.48,659.33 L999.67,662.50 L990.44,664.46 L981.00,663.81 L971.56,664.96 L962.23,663.51 L953.65,659.39 L944.95,656.32 L936.03,653.47 L927.50,649.49 L920.71,643.01 L914.07,636.61 L907.47,630.15 L902.66,622.31 L897.51,614.74 L893.09,606.70 L889.81,598.11 L888.13,589.11 L886.77,580.10 L886.34,571.00 L886.25,561.90 L888.00,552.96 L890.85,544.34 L892.24,535.15 L896.84,527.14 L901.49,519.20 L907.89,512.50 L912.82,504.52 L920.02,498.55 L928.54,494.44 L936.26,489.38 L944.34,484.70 L953.20,481.63 L962.21,478.91 L971.68,478.70 L981.00,477.35 L990.43,478.15 L999.60,480.30 L1008.87,481.90 L1018.00,484.37 L1026.54,488.37 L1034.23,493.73 L1041.90,499.02 L1047.98,506.03 L1054.60,512.42 L1061.22,519.01 L1065.31,527.29 L1068.81,535.72 L1072.78,544.00 L1075.42,552.78 L1076.74,561.85 Z" fill="#0a14f0" stroke="#1a1a2a" stroke-width="0.9"/>
<path d="M1060.66,571.00 L1060.26,578.61 L1057.46,585.83 L1055.66,593.08 L1054.39,600.64 L1050.89,607.43 L1046.79,613.87 L1041.63,619.52 L1036.86,625.47 L1031.12,630.55 L1024.86,635.02 L1017.84,638.21 L1011.11,641.88 L1003.82,644.35 L996.46,646.77 L988.82,648.38 L981.00,648.67 L973.32,647.55 L965.74,646.27 L958.40,644.12 L951.37,641.20 L944.51,638.00 L937.54,634.84 L931.54,630.14 L925.79,625.18 L919.90,620.21 L915.86,613.72 L911.85,607.28 L909.12,600.22 L906.93,593.05 L904.53,585.93 L903.76,578.47 L902.68,571.00 L902.14,563.43 L903.88,556.04 L906.64,549.01 L907.98,541.51 L911.45,534.76 L915.53,528.35 L919.88,522.10 L925.28,516.68 L930.98,511.58 L937.65,507.75 L943.66,502.89 L950.70,499.69 L958.46,498.54 L965.63,495.67 L973.29,494.63 L981.00,494.73 L988.73,494.97 L996.37,496.14 L1004.11,497.20 L1011.16,500.47 L1018.44,503.14 L1024.63,507.75 L1031.45,511.44 L1037.25,516.50 L1041.86,522.61 L1046.63,528.52 L1051.20,534.65 L1054.19,541.63 L1056.38,548.85 L1057.77,556.21 L1059.09,563.55 Z" fill="#1a50e0" stroke="#1a1a2a" stroke-width="0.9"/>
<path d="M1051.06,571.00 L1051.23,577.75 L1049.93,584.37 L1048.63,591.01 L1046.33,597.39 L1042.53,603.07 L1038.93,608.75 L1035.94,614.97 L1030.56,619.33 L1025.44,623.81 L1020.63,628.84 L1014.21,631.59 L1008.20,635.03 L1001.45,636.75 L994.80,638.65 L987.85,638.85 L981.00,639.97 L974.08,640.02 L967.34,638.47 L960.56,637.17 L954.10,634.78 L948.35,631.00 L941.87,628.52 L936.50,624.26 L931.74,619.38 L927.50,614.12 L922.29,609.53 L919.31,603.39 L915.99,597.45 L913.41,591.14 L911.99,584.48 L910.63,577.81 L911.18,571.00 L910.83,564.26 L912.44,557.70 L913.31,550.98 L915.74,544.64 L919.86,539.14 L923.31,533.41 L927.26,528.00 L930.95,522.20 L936.66,518.32 L941.99,514.08 L948.16,511.10 L954.21,507.93 L960.74,505.87 L967.39,504.30 L974.12,502.94 L981.00,502.61 L987.98,502.42 L994.81,503.77 L1001.68,505.02 L1008.21,507.41 L1014.63,510.10 L1020.33,514.02 L1025.36,518.67 L1031.28,522.32 L1036.10,527.22 L1040.19,532.71 L1043.28,538.77 L1046.47,544.75 L1048.00,551.33 L1050.70,557.58 L1051.28,564.30 Z" fill="#1890e0" stroke="#1a1a2a" stroke-width="0.9"/>
<path d="M1044.59,571.00 L1044.09,577.06 L1043.61,583.15 L1041.74,588.97 L1039.51,594.64 L1037.31,600.35 L1034.75,606.02 L1030.83,610.88 L1026.54,615.41 L1021.33,618.92 L1016.59,622.94 L1011.01,625.75 L1005.30,628.21 L999.40,630.16 L993.40,631.79 L987.34,633.75 L981.00,633.91 L974.73,633.57 L968.52,632.65 L962.70,630.29 L956.81,628.40 L950.98,626.21 L945.52,623.18 L940.37,619.66 L935.69,615.53 L932.40,610.20 L928.07,605.76 L924.77,600.54 L922.33,594.89 L920.70,588.98 L918.76,583.17 L918.43,577.06 L916.84,571.00 L917.25,564.88 L918.65,558.91 L920.53,553.11 L921.76,547.07 L924.90,541.76 L927.72,536.29 L931.50,531.40 L936.09,527.21 L940.80,523.24 L945.64,519.40 L951.12,516.49 L956.90,514.27 L962.65,512.03 L968.52,509.82 L974.84,510.06 L981.00,509.76 L987.29,509.20 L993.42,510.60 L999.59,511.70 L1005.47,513.84 L1011.06,516.60 L1016.98,518.91 L1021.30,523.49 L1026.16,527.31 L1030.12,532.00 L1034.38,536.49 L1037.14,541.97 L1039.92,547.39 L1042.61,552.92 L1043.50,558.97 L1044.78,564.92 Z" fill="#20d0e8" stroke="#1a1a2a" stroke-width="0.9"/>
<path d="M1039.37,571.00 L1039.26,576.60 L1038.49,582.15 L1037.29,587.65 L1035.08,592.85 L1032.85,598.03 L1028.84,602.18 L1025.95,606.98 L1022.59,611.56 L1018.05,615.03 L1013.65,618.65 L1008.18,620.59 L1003.26,623.40 L997.79,624.98 L992.37,626.73 L986.71,627.58 L981.00,627.09 L975.38,627.10 L969.80,626.37 L964.08,625.86 L958.78,623.77 L954.02,620.65 L948.71,618.53 L944.71,614.49 L940.08,611.25 L936.80,606.68 L933.60,602.16 L929.66,597.99 L928.06,592.57 L926.16,587.36 L923.75,582.20 L923.06,576.61 L923.59,571.00 L922.94,565.42 L924.36,560.01 L925.55,554.60 L928.07,549.62 L929.57,544.20 L932.80,539.60 L935.90,534.91 L939.81,530.84 L944.57,527.72 L949.05,524.38 L954.02,521.78 L959.11,519.47 L964.43,517.73 L969.80,516.09 L975.33,514.87 L981.00,515.41 L986.73,514.77 L992.31,516.04 L997.82,517.41 L1003.44,518.63 L1008.42,521.41 L1013.19,524.43 L1017.91,527.53 L1022.36,531.02 L1025.51,535.69 L1029.94,539.39 L1031.74,544.78 L1035.09,549.34 L1037.15,554.53 L1037.42,560.15 L1039.32,565.45 Z" fill="#20c8a8" stroke="#1a1a2a" stroke-width="0.9"/>
<path d="M1033.06,571.00 L1032.85,575.98 L1031.69,580.83 L1030.19,585.55 L1028.19,590.06 L1026.77,594.86 L1023.96,598.99 L1021.21,603.19 L1017.45,606.54 L1014.01,610.23 L1009.57,612.69 L1005.55,615.79 L1000.89,617.84 L995.98,619.15 L991.10,620.50 L986.09,621.40 L981.00,621.05 L975.98,621.24 L970.94,620.81 L966.22,618.98 L961.26,617.92 L956.76,615.66 L952.32,613.27 L948.65,609.82 L945.15,606.30 L941.14,603.22 L938.12,599.22 L935.91,594.74 L934.16,590.11 L932.36,585.53 L930.62,580.87 L930.30,575.92 L929.25,571.00 L929.94,566.10 L931.14,561.33 L931.82,556.45 L933.86,551.96 L935.38,547.22 L938.01,542.99 L941.41,539.32 L944.67,535.58 L948.36,532.23 L952.35,529.19 L956.59,526.47 L961.63,525.40 L966.19,523.39 L970.99,521.92 L976.01,521.55 L981.00,520.97 L986.02,521.81 L991.18,521.59 L996.02,523.20 L1000.60,525.30 L1005.47,526.80 L1009.59,529.68 L1013.56,532.69 L1017.54,535.72 L1020.62,539.61 L1023.69,543.46 L1027.00,547.26 L1028.99,551.81 L1029.89,556.68 L1032.04,561.20 L1031.85,566.16 Z" fill="#18b860" stroke="#1a1a2a" stroke-width="0.9"/>
<path d="M1027.40,571.00 L1026.99,575.42 L1026.87,579.90 L1025.14,584.06 L1024.09,588.41 L1021.97,592.35 L1019.34,595.98 L1017.03,599.84 L1013.59,602.78 L1010.52,606.08 L1006.62,608.40 L1002.75,610.69 L998.80,612.91 L994.63,614.83 L990.01,615.17 L985.54,615.93 L981.00,616.59 L976.43,616.71 L971.99,615.66 L967.65,614.38 L963.16,613.47 L959.51,610.64 L955.17,609.11 L951.90,605.95 L948.68,602.86 L945.69,599.57 L942.85,596.13 L940.03,592.59 L938.74,588.26 L936.80,584.22 L935.64,579.90 L935.26,575.44 L934.85,571.00 L935.60,566.64 L936.26,562.32 L937.20,558.04 L938.22,553.72 L940.41,549.85 L942.84,546.14 L945.29,542.43 L948.44,539.25 L951.90,536.42 L955.21,533.36 L959.16,531.17 L963.47,529.73 L967.59,527.91 L972.00,526.89 L976.44,525.87 L981.00,525.80 L985.54,526.50 L990.20,526.41 L994.40,528.38 L998.80,529.56 L1003.10,531.12 L1006.67,533.94 L1010.55,536.26 L1013.59,539.57 L1017.17,542.37 L1019.99,545.87 L1022.17,549.77 L1024.44,553.64 L1025.39,558.01 L1026.92,562.19 L1027.48,566.58 Z" fill="#10b818" stroke="#1a1a2a" stroke-width="0.9"/>
<path d="M1021.53,571.00 L1022.05,574.94 L1020.66,578.69 L1020.24,582.61 L1018.32,586.08 L1016.76,589.64 L1015.33,593.37 L1012.32,596.07 L1009.95,599.23 L1006.86,601.73 L1003.64,604.05 L1000.23,606.09 L996.50,607.49 L992.94,609.38 L988.88,609.64 L984.97,610.35 L981.00,610.33 L977.07,610.38 L973.16,609.94 L969.19,609.45 L965.62,607.66 L962.18,605.77 L958.74,603.89 L955.13,602.12 L952.80,598.84 L949.76,596.32 L947.59,593.04 L945.32,589.83 L943.91,586.17 L942.26,582.60 L941.48,578.76 L940.75,574.91 L940.31,571.00 L940.82,567.14 L941.81,563.40 L942.84,559.71 L943.37,555.80 L945.47,552.48 L947.74,549.33 L949.51,545.81 L952.45,543.16 L955.29,540.46 L958.41,538.03 L962.10,536.53 L965.63,534.82 L969.20,533.06 L973.21,532.80 L977.02,531.65 L981.00,532.09 L985.02,531.72 L989.00,532.28 L992.97,532.99 L996.74,534.40 L1000.23,536.34 L1003.50,538.57 L1006.67,540.88 L1009.87,543.20 L1012.55,546.07 L1014.58,549.39 L1017.33,552.30 L1018.70,555.96 L1020.23,559.54 L1020.75,563.39 L1021.35,567.17 Z" fill="#60c828" stroke="#1a1a2a" stroke-width="0.9"/>
<path d="M1016.67,571.00 L1016.42,574.40 L1015.71,577.73 L1015.46,581.20 L1013.59,584.17 L1012.49,587.42 L1010.97,590.53 L1008.32,592.87 L1006.28,595.65 L1003.71,597.99 L1000.62,599.63 L997.78,601.62 L994.73,603.33 L991.35,604.28 L988.00,605.34 L984.47,605.37 L981.00,605.60 L977.58,605.33 L974.13,605.16 L970.68,604.66 L967.50,603.24 L964.30,601.91 L961.50,599.87 L958.54,598.08 L956.35,595.39 L953.93,592.98 L951.61,590.43 L949.79,587.50 L948.54,584.30 L947.65,581.01 L946.67,577.76 L946.21,574.39 L945.98,571.00 L945.71,567.61 L946.73,564.35 L947.00,560.95 L948.18,557.75 L950.29,554.99 L951.82,551.99 L953.80,549.23 L956.39,547.01 L958.71,544.52 L961.25,542.19 L964.56,541.01 L967.50,539.22 L970.87,538.46 L974.12,537.28 L977.52,536.52 L981.00,536.92 L984.46,537.25 L987.90,537.68 L991.37,538.13 L994.50,539.66 L997.66,541.03 L1000.83,542.47 L1003.88,544.20 L1006.20,546.78 L1008.53,549.28 L1010.78,551.87 L1012.18,554.98 L1014.05,557.84 L1014.89,561.12 L1016.11,564.29 L1016.92,567.60 Z" fill="#b0d828" stroke="#1a1a2a" stroke-width="0.9"/>
<path d="M1012.45,571.00 L1012.20,574.00 L1011.85,576.99 L1010.84,579.83 L1010.23,582.81 L1008.91,585.55 L1007.20,588.08 L1005.07,590.27 L1003.21,592.67 L1000.84,594.58 L998.34,596.31 L995.96,598.30 L993.16,599.63 L990.02,599.99 L987.18,601.30 L984.09,601.56 L981.00,601.54 L977.99,601.32 L974.95,601.17 L972.04,600.28 L969.12,599.42 L966.38,598.12 L963.98,596.24 L961.27,594.83 L958.90,592.91 L956.84,590.65 L955.24,588.06 L954.05,585.28 L952.79,582.58 L951.69,579.81 L950.37,577.04 L950.39,573.99 L950.20,571.00 L949.95,568.02 L950.83,565.15 L951.40,562.24 L952.50,559.49 L954.03,556.95 L955.26,554.23 L956.92,551.73 L959.33,549.87 L961.53,547.87 L963.87,546.00 L966.60,544.73 L969.18,543.17 L971.96,541.95 L974.95,541.34 L977.97,540.99 L981.00,540.62 L984.05,541.27 L987.14,541.40 L990.09,542.26 L993.05,543.10 L995.66,544.68 L998.56,545.78 L1000.73,547.94 L1003.03,549.87 L1005.45,551.75 L1007.39,554.08 L1008.65,556.82 L1009.95,559.49 L1010.86,562.31 L1011.63,565.15 L1012.34,568.04 Z" fill="#f8e820" stroke="#1a1a2a" stroke-width="0.9"/>
<path d="M1007.27,571.00 L1007.21,573.52 L1007.06,576.06 L1006.15,578.44 L1005.30,580.82 L1004.24,583.12 L1002.70,585.15 L1001.34,587.28 L999.65,589.20 L997.80,590.97 L995.47,592.12 L993.34,593.52 L990.97,594.47 L988.69,595.73 L986.15,596.28 L983.55,596.25 L981.00,596.95 L978.44,596.82 L975.95,596.25 L973.49,595.62 L971.21,594.51 L968.98,593.36 L966.66,592.35 L964.81,590.62 L962.89,589.01 L961.18,587.17 L959.79,585.09 L958.27,583.08 L957.20,580.80 L956.11,578.51 L955.68,576.01 L955.24,573.52 L955.20,571.00 L955.22,568.52 L955.72,566.10 L956.44,563.74 L956.88,561.26 L957.98,559.00 L959.37,556.91 L960.96,554.96 L962.84,553.29 L964.74,551.68 L966.74,550.19 L968.96,549.04 L971.06,547.61 L973.53,546.99 L975.92,546.12 L978.48,546.03 L981.00,545.57 L983.60,545.76 L986.07,546.62 L988.58,547.10 L991.16,547.53 L993.39,548.83 L995.78,549.84 L997.64,551.60 L999.41,553.39 L1001.39,554.99 L1003.01,556.93 L1004.07,559.21 L1005.06,561.47 L1006.07,563.73 L1007.08,566.04 L1007.34,568.52 Z" fill="#f8a020" stroke="#1a1a2a" stroke-width="0.9"/>
<path d="M1001.49,571.00 L1001.48,572.97 L1001.19,574.92 L1000.45,576.76 L999.72,578.56 L999.03,580.40 L997.95,582.05 L996.96,583.78 L995.56,585.21 L994.04,586.50 L992.41,587.65 L990.70,588.71 L988.78,589.32 L986.94,590.11 L984.97,590.46 L983.03,591.10 L981.00,590.79 L979.02,591.06 L977.14,590.42 L975.17,590.22 L973.38,589.41 L971.59,588.60 L969.80,587.77 L968.46,586.28 L967.01,584.99 L965.39,583.81 L964.37,582.11 L963.53,580.34 L962.31,578.74 L961.66,576.87 L961.57,574.87 L961.13,572.96 L961.18,571.00 L961.19,569.10 L961.33,567.18 L962.02,565.39 L962.44,563.50 L963.55,561.91 L964.50,560.25 L965.42,558.54 L966.89,557.24 L968.34,555.96 L969.86,554.75 L971.58,553.81 L973.37,553.03 L975.26,552.55 L977.08,551.77 L979.02,551.38 L981.00,551.28 L983.02,551.52 L984.99,551.94 L986.93,552.40 L988.88,552.90 L990.70,553.73 L992.28,554.94 L993.92,556.02 L995.45,557.26 L996.85,558.63 L998.17,560.09 L999.08,561.81 L999.73,563.62 L1000.77,565.30 L1001.07,567.20 L1001.41,569.09 Z" fill="#f05010" stroke="#1a1a2a" stroke-width="0.9"/>
<path d="M992.93,571.00 L993.00,572.15 L992.82,573.30 L992.58,574.43 L992.00,575.45 L991.51,576.49 L990.89,577.45 L990.21,578.38 L989.53,579.33 L988.55,579.97 L987.67,580.75 L986.62,581.26 L985.57,581.77 L984.48,582.19 L983.36,582.58 L982.18,582.69 L981.00,582.58 L979.88,582.59 L978.78,582.39 L977.63,582.31 L976.57,581.90 L975.54,581.41 L974.56,580.81 L973.66,580.11 L972.78,579.37 L972.05,578.48 L971.49,577.47 L970.77,576.57 L970.38,575.48 L969.93,574.42 L969.70,573.29 L969.57,572.15 L969.54,571.00 L969.57,569.90 L969.77,568.82 L970.10,567.78 L970.29,566.68 L970.79,565.68 L971.33,564.70 L972.07,563.85 L972.86,563.06 L973.66,562.28 L974.67,561.76 L975.56,561.07 L976.61,560.66 L977.69,560.35 L978.77,560.08 L979.87,559.84 L981.00,559.85 L982.18,559.85 L983.35,559.98 L984.47,560.30 L985.55,560.73 L986.66,561.11 L987.62,561.74 L988.56,562.39 L989.42,563.13 L990.25,563.91 L990.88,564.83 L991.62,565.70 L992.21,566.66 L992.45,567.75 L992.83,568.80 L993.07,569.89 Z" fill="#e81808" stroke="#1a1a2a" stroke-width="0.9"/>
</g>
<g transform="translate(959.2,579.6) rotate(60)"><rect x="-22" y="-5.5" width="44" height="11" fill="#fff"/><text x="0" y="0.5" text-anchor="middle" dominant-baseline="central" font-family="Liberation Serif" font-size="10.5" font-weight="bold" fill="#111">100.0000</text></g>
<g transform="translate(940.7,591.2) rotate(60)"><rect x="-22" y="-5.5" width="44" height="11" fill="#fff"/><text x="0" y="0.5" text-anchor="middle" dominant-baseline="central" font-family="Liberation Serif" font-size="10.5" font-weight="bold" fill="#111">60.0000</text></g>
<g transform="translate(929.1,594.7) rotate(60)"><rect x="-22" y="-5.5" width="44" height="11" fill="#fff"/><text x="0" y="0.5" text-anchor="middle" dominant-baseline="central" font-family="Liberation Serif" font-size="10.5" font-weight="bold" fill="#111">40.0000</text></g>
<g transform="translate(918.7,601.6) rotate(60)"><rect x="-22" y="-5.5" width="44" height="11" fill="#fff"/><text x="0" y="0.5" text-anchor="middle" dominant-baseline="central" font-family="Liberation Serif" font-size="10.5" font-weight="bold" fill="#111">20.0000</text></g>
<g transform="translate(894.4,615.5) rotate(60)"><rect x="-22" y="-5.5" width="44" height="11" fill="#fff"/><text x="0" y="0.5" text-anchor="middle" dominant-baseline="central" font-family="Liberation Serif" font-size="10.5" font-weight="bold" fill="#111">10.0000</text></g>
<g transform="translate(887.5,624.8) rotate(60)"><rect x="-22" y="-5.5" width="44" height="11" fill="#fff"/><text x="0" y="0.5" text-anchor="middle" dominant-baseline="central" font-family="Liberation Serif" font-size="10.5" font-weight="bold" fill="#111">20.0000</text></g>
<line x1="839.5" y1="454.3" x2="839.5" y2="699.2" stroke="#111" stroke-width="1.2"/>
<line x1="839.5" y1="696.30" x2="842.8" y2="696.30" stroke="#111" stroke-width="1.2"/>
<line x1="839.5" y1="687.35" x2="842.8" y2="687.35" stroke="#111" stroke-width="1.2"/>
<line x1="839.5" y1="678.40" x2="844.8" y2="678.40" stroke="#111" stroke-width="1.2"/>
<text x="835.5" y="679.00" text-anchor="end" dominant-baseline="central" font-family="Liberation Sans" font-size="9.8" fill="#1a1a1a">-0.6</text>
<line x1="839.5" y1="669.45" x2="842.8" y2="669.45" stroke="#111" stroke-width="1.2"/>
<line x1="839.5" y1="660.50" x2="842.8" y2="660.50" stroke="#111" stroke-width="1.2"/>
<line x1="839.5" y1="651.55" x2="842.8" y2="651.55" stroke="#111" stroke-width="1.2"/>
<line x1="839.5" y1="642.60" x2="844.8" y2="642.60" stroke="#111" stroke-width="1.2"/>
<text x="835.5" y="643.20" text-anchor="end" dominant-baseline="central" font-family="Liberation Sans" font-size="9.8" fill="#1a1a1a">-0.4</text>
<line x1="839.5" y1="633.65" x2="842.8" y2="633.65" stroke="#111" stroke-width="1.2"/>
<line x1="839.5" y1="624.70" x2="842.8" y2="624.70" stroke="#111" stroke-width="1.2"/>
<line x1="839.5" y1="615.75" x2="842.8" y2="615.75" stroke="#111" stroke-width="1.2"/>
<line x1="839.5" y1="606.80" x2="844.8" y2="606.80" stroke="#111" stroke-width="1.2"/>
<text x="835.5" y="607.40" text-anchor="end" dominant-baseline="central" font-family="Liberation Sans" font-size="9.8" fill="#1a1a1a">-0.2</text>
<line x1="839.5" y1="597.85" x2="842.8" y2="597.85" stroke="#111" stroke-width="1.2"/>
<line x1="839.5" y1="588.90" x2="842.8" y2="588.90" stroke="#111" stroke-width="1.2"/>
<line x1="839.5" y1="579.95" x2="842.8" y2="579.95" stroke="#111" stroke-width="1.2"/>
<line x1="839.5" y1="571.00" x2="844.8" y2="571.00" stroke="#111" stroke-width="1.2"/>
<text x="835.5" y="571.60" text-anchor="end" dominant-baseline="central" font-family="Liberation Sans" font-size="9.8" fill="#1a1a1a">0</text>
<line x1="839.5" y1="562.05" x2="842.8" y2="562.05" stroke="#111" stroke-width="1.2"/>
<line x1="839.5" y1="553.10" x2="842.8" y2="553.10" stroke="#111" stroke-width="1.2"/>
<line x1="839.5" y1="544.15" x2="842.8" y2="544.15" stroke="#111" stroke-width="1.2"/>
<line x1="839.5" y1="535.20" x2="844.8" y2="535.20" stroke="#111" stroke-width="1.2"/>
<text x="835.5" y="535.80" text-anchor="end" dominant-baseline="central" font-family="Liberation Sans" font-size="9.8" fill="#1a1a1a">0.2</text>
<line x1="839.5" y1="526.25" x2="842.8" y2="526.25" stroke="#111" stroke-width="1.2"/>
<line x1="839.5" y1="517.30" x2="842.8" y2="517.30" stroke="#111" stroke-width="1.2"/>
<line x1="839.5" y1="508.35" x2="842.8" y2="508.35" stroke="#111" stroke-width="1.2"/>
<line x1="839.5" y1="499.40" x2="844.8" y2="499.40" stroke="#111" stroke-width="1.2"/>
<text x="835.5" y="500.00" text-anchor="end" dominant-baseline="central" font-family="Liberation Sans" font-size="9.8" fill="#1a1a1a">0.4</text>
<line x1="839.5" y1="490.45" x2="842.8" y2="490.45" stroke="#111" stroke-width="1.2"/>
<line x1="839.5" y1="481.50" x2="842.8" y2="481.50" stroke="#111" stroke-width="1.2"/>
<line x1="839.5" y1="472.55" x2="842.8" y2="472.55" stroke="#111" stroke-width="1.2"/>
<line x1="839.5" y1="463.60" x2="844.8" y2="463.60" stroke="#111" stroke-width="1.2"/>
<text x="835.5" y="464.20" text-anchor="end" dominant-baseline="central" font-family="Liberation Sans" font-size="9.8" fill="#1a1a1a">0.6</text>
<line x1="839.5" y1="454.65" x2="842.8" y2="454.65" stroke="#111" stroke-width="1.2"/>
<line x1="839.5" y1="699.2" x2="1125.7" y2="699.2" stroke="#111" stroke-width="1.2"/>
<line x1="839.50" y1="699.2" x2="839.50" y2="695.9000000000001" stroke="#111" stroke-width="1.2"/>
<line x1="857.40" y1="699.2" x2="857.40" y2="695.9000000000001" stroke="#111" stroke-width="1.2"/>
<line x1="875.30" y1="699.2" x2="875.30" y2="695.9000000000001" stroke="#111" stroke-width="1.2"/>
<line x1="893.20" y1="699.2" x2="893.20" y2="693.9000000000001" stroke="#111" stroke-width="1.2"/>
<text x="893.20" y="707.0" text-anchor="middle" dominant-baseline="central" font-family="Liberation Sans" font-size="9.8" fill="#1a1a1a">-0.5</text>
<line x1="911.10" y1="699.2" x2="911.10" y2="695.9000000000001" stroke="#111" stroke-width="1.2"/>
<line x1="929.00" y1="699.2" x2="929.00" y2="695.9000000000001" stroke="#111" stroke-width="1.2"/>
<line x1="946.90" y1="699.2" x2="946.90" y2="695.9000000000001" stroke="#111" stroke-width="1.2"/>
<line x1="964.80" y1="699.2" x2="964.80" y2="695.9000000000001" stroke="#111" stroke-width="1.2"/>
<line x1="982.70" y1="699.2" x2="982.70" y2="693.9000000000001" stroke="#111" stroke-width="1.2"/>
<text x="982.70" y="707.0" text-anchor="middle" dominant-baseline="central" font-family="Liberation Sans" font-size="9.8" fill="#1a1a1a">0</text>
<line x1="1000.60" y1="699.2" x2="1000.60" y2="695.9000000000001" stroke="#111" stroke-width="1.2"/>
<line x1="1018.50" y1="699.2" x2="1018.50" y2="695.9000000000001" stroke="#111" stroke-width="1.2"/>
<line x1="1036.40" y1="699.2" x2="1036.40" y2="695.9000000000001" stroke="#111" stroke-width="1.2"/>
<line x1="1054.30" y1="699.2" x2="1054.30" y2="695.9000000000001" stroke="#111" stroke-width="1.2"/>
<line x1="1072.20" y1="699.2" x2="1072.20" y2="693.9000000000001" stroke="#111" stroke-width="1.2"/>
<text x="1072.20" y="707.0" text-anchor="middle" dominant-baseline="central" font-family="Liberation Sans" font-size="9.8" fill="#1a1a1a">0.5</text>
<line x1="1090.10" y1="699.2" x2="1090.10" y2="695.9000000000001" stroke="#111" stroke-width="1.2"/>
<line x1="1108.00" y1="699.2" x2="1108.00" y2="695.9000000000001" stroke="#111" stroke-width="1.2"/>
<line x1="1125.90" y1="699.2" x2="1125.90" y2="695.9000000000001" stroke="#111" stroke-width="1.2"/>
<text x="982.7" y="716" text-anchor="middle" dominant-baseline="central" font-family="Liberation Sans" font-weight="bold" font-size="11.5" fill="#111">X</text>
<text transform="translate(812,576) rotate(-90)" text-anchor="middle" dominant-baseline="central" font-family="Liberation Sans" font-weight="bold" font-size="11.5" fill="#111">Z</text>
<rect x="1090.5" y="478" width="62" height="141.3" fill="none" stroke="#222" stroke-width="1"/>
<rect x="1107.5" y="478.5" width="44.5" height="4" fill="#fff"/>
<text x="1129" y="487" text-anchor="middle" dominant-baseline="central" font-family="Liberation Sans" font-size="8" fill="#222">V</text>
<rect x="1095" y="495.00" width="12.3" height="4.63" fill="#c81818" stroke="#333" stroke-width="0.5"/>
<rect x="1095" y="499.63" width="12.3" height="9.26" fill="#e84818" stroke="#333" stroke-width="0.5"/>
<rect x="1095" y="508.88" width="12.3" height="9.26" fill="#f0a020" stroke="#333" stroke-width="0.5"/>
<rect x="1095" y="518.14" width="12.3" height="9.26" fill="#f8e020" stroke="#333" stroke-width="0.5"/>
<rect x="1095" y="527.40" width="12.3" height="9.26" fill="#a8d830" stroke="#333" stroke-width="0.5"/>
<rect x="1095" y="536.65" width="12.3" height="9.26" fill="#60c828" stroke="#333" stroke-width="0.5"/>
<rect x="1095" y="545.91" width="12.3" height="9.26" fill="#10b010" stroke="#333" stroke-width="0.5"/>
<rect x="1095" y="555.16" width="12.3" height="9.26" fill="#20b040" stroke="#333" stroke-width="0.5"/>
<rect x="1095" y="564.42" width="12.3" height="9.26" fill="#20c0a0" stroke="#333" stroke-width="0.5"/>
<rect x="1095" y="573.68" width="12.3" height="9.26" fill="#20d0e8" stroke="#333" stroke-width="0.5"/>
<rect x="1095" y="582.93" width="12.3" height="9.26" fill="#2090e0" stroke="#333" stroke-width="0.5"/>
<rect x="1095" y="592.19" width="12.3" height="9.26" fill="#1858d8" stroke="#333" stroke-width="0.5"/>
<rect x="1095" y="601.44" width="12.3" height="9.26" fill="#1010f0" stroke="#333" stroke-width="0.5"/>
<text x="1146.5" y="501.00" text-anchor="end" dominant-baseline="central" font-family="Liberation Sans" font-size="8.5" fill="#1a1a1a">120.0000</text>
<text x="1146.5" y="510.59" text-anchor="end" dominant-baseline="central" font-family="Liberation Sans" font-size="8.5" fill="#1a1a1a">110.0000</text>
<text x="1146.5" y="520.18" text-anchor="end" dominant-baseline="central" font-family="Liberation Sans" font-size="8.5" fill="#1a1a1a">100.0000</text>
<text x="1146.5" y="529.77" text-anchor="end" dominant-baseline="central" font-family="Liberation Sans" font-size="8.5" fill="#1a1a1a">90.0000</text>
<text x="1146.5" y="539.36" text-anchor="end" dominant-baseline="central" font-family="Liberation Sans" font-size="8.5" fill="#1a1a1a">80.0000</text>
<text x="1146.5" y="548.95" text-anchor="end" dominant-baseline="central" font-family="Liberation Sans" font-size="8.5" fill="#1a1a1a">70.0000</text>
<text x="1146.5" y="558.54" text-anchor="end" dominant-baseline="central" font-family="Liberation Sans" font-size="8.5" fill="#1a1a1a">60.0000</text>
<text x="1146.5" y="568.13" text-anchor="end" dominant-baseline="central" font-family="Liberation Sans" font-size="8.5" fill="#1a1a1a">50.0000</text>
<text x="1146.5" y="577.72" text-anchor="end" dominant-baseline="central" font-family="Liberation Sans" font-size="8.5" fill="#1a1a1a">40.0000</text>
<text x="1146.5" y="587.31" text-anchor="end" dominant-baseline="central" font-family="Liberation Sans" font-size="8.5" fill="#1a1a1a">30.0000</text>
<text x="1146.5" y="596.90" text-anchor="end" dominant-baseline="central" font-family="Liberation Sans" font-size="8.5" fill="#1a1a1a">20.0000</text>
<text x="1146.5" y="606.49" text-anchor="end" dominant-baseline="central" font-family="Liberation Sans" font-size="8.5" fill="#1a1a1a">10.0000</text>
<rect x="1174.5" y="420.5" width="373.5" height="310.5" fill="none" stroke="#1c1c1c" stroke-width="2.1"/>
<polyline points="1222.4,662.9 1244.6,657.7 1274.2,649.6 1286.1,647.4 1303.9,640.7 1321.6,634.1 1333.5,630.8 1348.3,622.9 1360.1,619.2 1370.5,613.3 1381.6,603.7 1391.2,598.5 1401.6,583.7 1407.5,581.5 1414.2,571.8 1416.7,560 1420,543.3 1425.6,535.6 1431.1,506.7 1435.5,470 1438,456.7 1440.5,468 1445.6,511.1 1448.9,512.8 1463.3,526.7 1476.7,540 1484.5,551 1485.8,553.5 1486.3,548.5 1486.5,557 1487.2,558 1490.4,575 1493.4,654.4 1498,678.9 1502.6,695.7" fill="none" stroke="#ac3020" stroke-width="1.0"/>
<line x1="1222.4" y1="433.5" x2="1222.4" y2="697.5" stroke="#111" stroke-width="1.2"/>
<line x1="1222.4" y1="697.60" x2="1225.4" y2="697.60" stroke="#111" stroke-width="1.2"/>
<line x1="1222.4" y1="683.70" x2="1225.4" y2="683.70" stroke="#111" stroke-width="1.2"/>
<line x1="1222.4" y1="669.80" x2="1225.4" y2="669.80" stroke="#111" stroke-width="1.2"/>
<line x1="1222.4" y1="655.90" x2="1225.4" y2="655.90" stroke="#111" stroke-width="1.2"/>
<line x1="1222.4" y1="642.00" x2="1227.7" y2="642.00" stroke="#111" stroke-width="1.2"/>
<text x="1217.4" y="642.60" text-anchor="end" dominant-baseline="central" font-family="Liberation Sans" font-size="9.8" fill="#1a1a1a">0.5</text>
<line x1="1222.4" y1="628.10" x2="1225.4" y2="628.10" stroke="#111" stroke-width="1.2"/>
<line x1="1222.4" y1="614.20" x2="1225.4" y2="614.20" stroke="#111" stroke-width="1.2"/>
<line x1="1222.4" y1="600.30" x2="1225.4" y2="600.30" stroke="#111" stroke-width="1.2"/>
<line x1="1222.4" y1="586.40" x2="1225.4" y2="586.40" stroke="#111" stroke-width="1.2"/>
<line x1="1222.4" y1="572.50" x2="1227.7" y2="572.50" stroke="#111" stroke-width="1.2"/>
<text x="1217.4" y="573.10" text-anchor="end" dominant-baseline="central" font-family="Liberation Sans" font-size="9.8" fill="#1a1a1a">1</text>
<line x1="1222.4" y1="558.60" x2="1225.4" y2="558.60" stroke="#111" stroke-width="1.2"/>
<line x1="1222.4" y1="544.70" x2="1225.4" y2="544.70" stroke="#111" stroke-width="1.2"/>
<line x1="1222.4" y1="530.80" x2="1225.4" y2="530.80" stroke="#111" stroke-width="1.2"/>
<line x1="1222.4" y1="516.90" x2="1225.4" y2="516.90" stroke="#111" stroke-width="1.2"/>
<line x1="1222.4" y1="503.00" x2="1227.7" y2="503.00" stroke="#111" stroke-width="1.2"/>
<text x="1217.4" y="503.60" text-anchor="end" dominant-baseline="central" font-family="Liberation Sans" font-size="9.8" fill="#1a1a1a">1.5</text>
<line x1="1222.4" y1="489.10" x2="1225.4" y2="489.10" stroke="#111" stroke-width="1.2"/>
<line x1="1222.4" y1="475.20" x2="1225.4" y2="475.20" stroke="#111" stroke-width="1.2"/>
<line x1="1222.4" y1="461.30" x2="1225.4" y2="461.30" stroke="#111" stroke-width="1.2"/>
<line x1="1222.4" y1="447.40" x2="1225.4" y2="447.40" stroke="#111" stroke-width="1.2"/>
<line x1="1222.4" y1="433.50" x2="1227.7" y2="433.50" stroke="#111" stroke-width="1.2"/>
<text x="1217.4" y="434.10" text-anchor="end" dominant-baseline="central" font-family="Liberation Sans" font-size="9.8" fill="#1a1a1a">2</text>
<line x1="1222.4" y1="697.5" x2="1503.5" y2="697.5" stroke="#111" stroke-width="1.2"/>
<line x1="1227.96" y1="697.5" x2="1227.96" y2="694.5" stroke="#111" stroke-width="1.2"/>
<line x1="1236.90" y1="697.5" x2="1236.90" y2="692.2" stroke="#111" stroke-width="1.2"/>
<text x="1236.90" y="704.7" text-anchor="middle" dominant-baseline="central" font-family="Liberation Sans" font-size="9.8" fill="#1a1a1a">-3</text>
<line x1="1245.84" y1="697.5" x2="1245.84" y2="694.5" stroke="#111" stroke-width="1.2"/>
<line x1="1254.78" y1="697.5" x2="1254.78" y2="694.5" stroke="#111" stroke-width="1.2"/>
<line x1="1263.72" y1="697.5" x2="1263.72" y2="694.5" stroke="#111" stroke-width="1.2"/>
<line x1="1272.66" y1="697.5" x2="1272.66" y2="694.5" stroke="#111" stroke-width="1.2"/>
<line x1="1281.60" y1="697.5" x2="1281.60" y2="692.2" stroke="#111" stroke-width="1.2"/>
<text x="1281.60" y="704.7" text-anchor="middle" dominant-baseline="central" font-family="Liberation Sans" font-size="9.8" fill="#1a1a1a">-2.5</text>
<line x1="1290.54" y1="697.5" x2="1290.54" y2="694.5" stroke="#111" stroke-width="1.2"/>
<line x1="1299.48" y1="697.5" x2="1299.48" y2="694.5" stroke="#111" stroke-width="1.2"/>
<line x1="1308.42" y1="697.5" x2="1308.42" y2="694.5" stroke="#111" stroke-width="1.2"/>
<line x1="1317.36" y1="697.5" x2="1317.36" y2="694.5" stroke="#111" stroke-width="1.2"/>
<line x1="1326.30" y1="697.5" x2="1326.30" y2="692.2" stroke="#111" stroke-width="1.2"/>
<text x="1326.30" y="704.7" text-anchor="middle" dominant-baseline="central" font-family="Liberation Sans" font-size="9.8" fill="#1a1a1a">-2</text>
<line x1="1335.24" y1="697.5" x2="1335.24" y2="694.5" stroke="#111" stroke-width="1.2"/>
<line x1="1344.18" y1="697.5" x2="1344.18" y2="694.5" stroke="#111" stroke-width="1.2"/>
<line x1="1353.12" y1="697.5" x2="1353.12" y2="694.5" stroke="#111" stroke-width="1.2"/>
<line x1="1362.06" y1="697.5" x2="1362.06" y2="694.5" stroke="#111" stroke-width="1.2"/>
<line x1="1371.00" y1="697.5" x2="1371.00" y2="692.2" stroke="#111" stroke-width="1.2"/>
<text x="1371.00" y="704.7" text-anchor="middle" dominant-baseline="central" font-family="Liberation Sans" font-size="9.8" fill="#1a1a1a">-1.5</text>
<line x1="1379.94" y1="697.5" x2="1379.94" y2="694.5" stroke="#111" stroke-width="1.2"/>
<line x1="1388.88" y1="697.5" x2="1388.88" y2="694.5" stroke="#111" stroke-width="1.2"/>
<line x1="1397.82" y1="697.5" x2="1397.82" y2="694.5" stroke="#111" stroke-width="1.2"/>
<line x1="1406.76" y1="697.5" x2="1406.76" y2="694.5" stroke="#111" stroke-width="1.2"/>
<line x1="1415.70" y1="697.5" x2="1415.70" y2="692.2" stroke="#111" stroke-width="1.2"/>
<text x="1415.70" y="704.7" text-anchor="middle" dominant-baseline="central" font-family="Liberation Sans" font-size="9.8" fill="#1a1a1a">-1</text>
<line x1="1424.64" y1="697.5" x2="1424.64" y2="694.5" stroke="#111" stroke-width="1.2"/>
<line x1="1433.58" y1="697.5" x2="1433.58" y2="694.5" stroke="#111" stroke-width="1.2"/>
<line x1="1442.52" y1="697.5" x2="1442.52" y2="694.5" stroke="#111" stroke-width="1.2"/>
<line x1="1451.46" y1="697.5" x2="1451.46" y2="694.5" stroke="#111" stroke-width="1.2"/>
<line x1="1460.40" y1="697.5" x2="1460.40" y2="692.2" stroke="#111" stroke-width="1.2"/>
<text x="1460.40" y="704.7" text-anchor="middle" dominant-baseline="central" font-family="Liberation Sans" font-size="9.8" fill="#1a1a1a">-0.5</text>
<line x1="1469.34" y1="697.5" x2="1469.34" y2="694.5" stroke="#111" stroke-width="1.2"/>
<line x1="1478.28" y1="697.5" x2="1478.28" y2="694.5" stroke="#111" stroke-width="1.2"/>
<line x1="1487.22" y1="697.5" x2="1487.22" y2="694.5" stroke="#111" stroke-width="1.2"/>
<line x1="1496.16" y1="697.5" x2="1496.16" y2="694.5" stroke="#111" stroke-width="1.2"/>
<text x="1362.4" y="713.3" text-anchor="middle" dominant-baseline="central" font-family="Liberation Sans" font-weight="bold" font-size="11.5" fill="#111">Y</text>
<text transform="translate(1196,566) rotate(-90)" text-anchor="middle" dominant-baseline="central" font-family="Liberation Sans" font-weight="bold" font-size="11.5" fill="#111">Ma</text>
</svg>
<svg style="left:0;top:0" width="1728" height="100" viewBox="0 0 1728 100">
<defs><linearGradient id="lb" x1="0" y1="0" x2="1" y2="1"><stop offset="0" stop-color="#ffffff"/><stop offset="1" stop-color="#a8d8f0"/></linearGradient><linearGradient id="lb2" x1="0" y1="0" x2="0" y2="1"><stop offset="0" stop-color="#f4fbff"/><stop offset="1" stop-color="#b0daf0"/></linearGradient><radialGradient id="mg" cx="0.4" cy="0.4" r="0.6"><stop offset="0" stop-color="#9be4ff"/><stop offset="1" stop-color="#1a8ad0"/></radialGradient><linearGradient id="gi" x1="0" y1="0" x2="1" y2="1"><stop offset="0" stop-color="#d8eefa"/><stop offset="1" stop-color="#1a88c0"/></linearGradient></defs>
<path d="M-4,61 L18,61 L21.5,64 L21.5,89.4 L-4,89.4 Z" fill="#0e5a86"/>
<rect x="-2" y="62.5" width="19.5" height="14.5" fill="url(#lb)"/>
<rect x="1.7" y="81.7" width="14" height="7.3" fill="#fff"/>
<rect x="3.8" y="83.5" width="2.5" height="3" fill="#111"/>
<rect x="36.2" y="61.3" width="17.3" height="7" fill="#fff" stroke="#0e4a6e" stroke-width="1.3"/>
<rect x="31.9" y="67.8" width="25.7" height="16" rx="2" fill="#0e5a86"/>
<rect x="37.5" y="79.5" width="14.2" height="9" fill="#fff"/>
<rect x="39.5" y="81" width="10" height="5" fill="#c8c8c8"/>
<rect x="35" y="71" width="2" height="1.5" fill="#9ad"/>
<line x1="65.5" y1="58" x2="65.5" y2="92" stroke="#c4c4c4" stroke-width="1"/>
<rect x="70.2" y="60" width="1.6" height="1.6" fill="#9a9a9a"/>
<rect x="70.2" y="64" width="1.6" height="1.6" fill="#9a9a9a"/>
<rect x="70.2" y="68" width="1.6" height="1.6" fill="#9a9a9a"/>
<rect x="70.2" y="72" width="1.6" height="1.6" fill="#9a9a9a"/>
<rect x="70.2" y="76" width="1.6" height="1.6" fill="#9a9a9a"/>
<rect x="70.2" y="80" width="1.6" height="1.6" fill="#9a9a9a"/>
<rect x="70.2" y="84" width="1.6" height="1.6" fill="#9a9a9a"/>
<rect x="70.2" y="88" width="1.6" height="1.6" fill="#9a9a9a"/>
<rect x="78.5" y="57.5" width="36" height="34" fill="#b5cce4" stroke="#9ab4d2" stroke-width="1"/>
<path d="M89.2,62.6 L89.2,87.3 L94.5,82.5 L98.5,89.8 L102.3,88 L98.4,80.9 L105.9,80.7 Z" fill="#2a96c4" stroke="#0d4a6a" stroke-width="1.1" stroke-linejoin="round"/>
<line x1="118.4" y1="71.9" x2="130.3" y2="60.3" stroke="#333" stroke-width="0.9"/>
<rect x="121" y="63.8" width="5" height="5" fill="#c82828" stroke="#801818" stroke-width="0.6"/>
<path d="M127.8,69.3 L135.5,87.5 L138.5,83 L142.5,87 L145.5,84.5 L141.3,80.5 L147.2,77.1 Z" fill="#2a96c4" stroke="#0d4a6a" stroke-width="1.1" stroke-linejoin="round"/>
<line x1="155.5" y1="58" x2="155.5" y2="92" stroke="#c4c4c4" stroke-width="1"/>
<line x1="179.5" y1="77.5" x2="188" y2="86.5" stroke="#2a3850" stroke-width="4.2" stroke-linecap="round"/>
<circle cx="172.5" cy="70" r="8.2" fill="url(#mg)" stroke="#1a5a80" stroke-width="1.6"/>
<path d="M214.2,61.3 L221.2,68.3 L216.39999999999998,68.3 L216.39999999999998,73.1 L221.2,73.1 L221.2,68.3 L228.2,75.3 L221.2,82.3 L221.2,77.5 L216.39999999999998,77.5 L216.39999999999998,82.3 L221.2,82.3 L214.2,89.3 L207.2,82.3 L212.0,82.3 L212.0,77.5 L207.2,77.5 L207.2,82.3 L200.2,75.3 L207.2,68.3 L207.2,73.1 L212.0,73.1 L212.0,68.3 L207.2,68.3 Z" fill="#1f6f90" stroke="#124a66" stroke-width="0.8" stroke-linejoin="round"/>
<rect x="208.2" y="69.3" width="3.5" height="3.5" fill="#e8e8e8"/><rect x="216.7" y="69.3" width="3.5" height="3.5" fill="#e8e8e8"/><rect x="208.2" y="77.8" width="3.5" height="3.5" fill="#e8e8e8"/><rect x="216.7" y="77.8" width="3.5" height="3.5" fill="#e8e8e8"/>
<line x1="236.4" y1="58" x2="236.4" y2="92" stroke="#c4c4c4" stroke-width="1"/>
<line x1="258.2" y1="61.4" x2="258.2" y2="88.2" stroke="#6e6e6e" stroke-width="1.6"/>
<path d="M248,69 C262,66 273,69 271,74 C269,78 258,78 258,78" fill="none" stroke="#8c8c8c" stroke-width="3.2"/>
<path d="M244.5,68.5 L251,63.5 L251,73.5 Z" fill="#8c8c8c"/>
<path d="M248,86 L250,81 L253,84 M267,86 L269,81 L272,84" fill="none" stroke="#6e6e6e" stroke-width="1.4"/>
<path d="M282,80 C280,75 290,73 300,74 L306,74" fill="none" stroke="#8c8c8c" stroke-width="3"/>
<path d="M303.5,69 L309.5,74 L303.5,79 Z" fill="#8c8c8c"/>
<path d="M287,88 C282,80 288,70 294,65" fill="none" stroke="#8c8c8c" stroke-width="3"/>
<path d="M290,63 L296.5,61.5 L296,68 Z" fill="#8c8c8c"/>
<path d="M288,77 L302,77 L300,82 L286,82 Z" fill="none" stroke="#6e6e6e" stroke-width="1"/>
<path d="M322.5,71 A10.5,10.5 0 1 0 342,79" fill="none" stroke="#8c8c8c" stroke-width="2.4"/>
<path d="M334,63.5 A10.5,10.5 0 0 1 342.5,71" fill="none" stroke="#8c8c8c" stroke-width="2.4"/>
<path d="M319,72.5 L323,66 L327,72.5 Z" fill="#8c8c8c"/><path d="M338.5,77 L345.5,77 L342,82.5 Z" fill="#8c8c8c"/>
<circle cx="332" cy="75.1" r="1.2" fill="#6e6e6e"/>
<line x1="360" y1="87" x2="382.5" y2="64" stroke="#6e6e6e" stroke-width="1.3"/>
<path d="M376,86 C372,80 368,73 366,66" fill="none" stroke="#8c8c8c" stroke-width="3.2"/>
<path d="M362,66 L364.5,62 L370,67 Z" fill="#8c8c8c"/>
<text x="355.5" y="84" font-family="Liberation Sans" font-size="9" font-weight="bold" fill="#6e6e6e">X</text>
<line x1="363" y1="78" x2="372" y2="87" stroke="#6e6e6e" stroke-width="1.1"/>
<line x1="392.5" y1="64" x2="415" y2="87" stroke="#6e6e6e" stroke-width="1.3"/>
<path d="M398,86 C397,78 403,70 409,66" fill="none" stroke="#8c8c8c" stroke-width="3.2"/>
<path d="M405.5,63.5 L412,62.5 L410.5,69 Z" fill="#8c8c8c"/>
<text x="411.5" y="85" font-family="Liberation Sans" font-size="9" font-weight="bold" fill="#6e6e6e">Y</text>
<line x1="442" y1="62" x2="442" y2="89" stroke="#6e6e6e" stroke-width="1.5"/>
<path d="M433,73 C445,71 457,73 456,78 C455,82 444,82 444,82" fill="none" stroke="#8c8c8c" stroke-width="3.2"/>
<path d="M428.5,73 L435,68 L435,78 Z" fill="#8c8c8c"/>
<text x="444.5" y="70" font-family="Liberation Sans" font-size="9" font-weight="bold" fill="#6e6e6e">Z</text>
<line x1="463.6" y1="58" x2="463.6" y2="92" stroke="#c4c4c4" stroke-width="1"/>
<rect x="468.59999999999997" y="60" width="1.6" height="1.6" fill="#9a9a9a"/>
<rect x="468.59999999999997" y="64" width="1.6" height="1.6" fill="#9a9a9a"/>
<rect x="468.59999999999997" y="68" width="1.6" height="1.6" fill="#9a9a9a"/>
<rect x="468.59999999999997" y="72" width="1.6" height="1.6" fill="#9a9a9a"/>
<rect x="468.59999999999997" y="76" width="1.6" height="1.6" fill="#9a9a9a"/>
<rect x="468.59999999999997" y="80" width="1.6" height="1.6" fill="#9a9a9a"/>
<rect x="468.59999999999997" y="84" width="1.6" height="1.6" fill="#9a9a9a"/>
<rect x="468.59999999999997" y="88" width="1.6" height="1.6" fill="#9a9a9a"/>
<path d="M491,61.3 L505.3,70 L505.3,89.3 L491,80.5 Z" fill="#b8b8b8" stroke="#6e6e6e" stroke-width="1"/>
<path d="M484,70 L490,67 L497,69 L497,82 L490,85 L484,82 Z" fill="#d4d4d4" stroke="#6e6e6e" stroke-width="1"/>
<path d="M484,70 L490,72.5 L497,69 M490,72.5 L490,85" fill="none" stroke="#6e6e6e" stroke-width="0.9"/>
<rect x="516" y="70" width="4" height="4" fill="#8c8c8c"/>
<path d="M519,72 C526,60 532,60 536,66 C539,72 541,78 540,84" fill="none" stroke="#8c8c8c" stroke-width="1.5"/>
<path d="M535,80 L541,88 L545,79 Z" fill="#8c8c8c"/>
<rect x="553.2" y="70" width="4" height="4" fill="#8c8c8c"/>
<path d="M556,72 C563,60 569,60 573,66 C576,72 578,78 577,84 L573,88" fill="none" stroke="#8c8c8c" stroke-width="1.5"/>
<path d="M572,74 L576.5,79 L580,72" fill="none" stroke="#8c8c8c" stroke-width="1.4"/>
<rect x="591.1" y="61.3" width="27.9" height="27.3" fill="#c8c8c8" stroke="#6e6e6e" stroke-width="1.3"/>
<path d="M592.1,73.3 C599.1,66.3 605.1,63.3 609.1,62.3" fill="none" stroke="#f0f0f0" stroke-width="2.5"/>
<path d="M592.1,85.3 C601.1,75.3 609.1,69.3 618.1,63.3" fill="none" stroke="#7a7a7a" stroke-width="7"/>
<path d="M608.1,79.3 h8 M612.1,75.3 v8" stroke="#f4f4f4" stroke-width="3"/>
<rect x="627.7" y="61.3" width="27.9" height="27.3" fill="#c8c8c8" stroke="#6e6e6e" stroke-width="1.3"/>
<path d="M628.7,73.3 C635.7,66.3 641.7,63.3 645.7,62.3" fill="none" stroke="#f0f0f0" stroke-width="2.5"/>
<path d="M628.7,85.3 C637.7,75.3 645.7,69.3 654.7,63.3" fill="none" stroke="#fafafa" stroke-width="6"/>
<path d="M641.7,77.3 h10" stroke="#7a7a7a" stroke-width="3"/>
<rect x="665.0" y="61.3" width="27.9" height="27.3" fill="#c8c8c8" stroke="#6e6e6e" stroke-width="1.3"/>
<path d="M666.0,73.3 C673.0,66.3 679.0,63.3 683.0,62.3" fill="none" stroke="#f0f0f0" stroke-width="2.5"/>
<path d="M666.0,85.3 C675.0,75.3 683.0,69.3 692.0,63.3" fill="none" stroke="#e6e6e6" stroke-width="3"/>
<rect x="670.0" y="70.3" width="14" height="9" rx="3" fill="#fafafa" stroke="#6e6e6e" stroke-width="1"/>
<text x="677.0" y="77.8" text-anchor="middle" font-family="Liberation Sans" font-size="8" fill="#6e6e6e">1.2</text>
<path d="M682.0,83.3 h8 M686.0,79.3 v8" stroke="#9a9a9a" stroke-width="2.5"/>
<line x1="701.5" y1="58" x2="701.5" y2="92" stroke="#c4c4c4" stroke-width="1"/>
<rect x="709.3" y="61.1" width="27.4" height="27.2" fill="url(#gi)" stroke="#0e3a5e" stroke-width="1.4"/>
<path d="M718.5,61 V88.3 M727.5,61 V88.3 M709.3,70.2 H736.7 M709.3,79.2 H736.7" stroke="#0e3a5e" stroke-width="1"/>
<path d="M721,66 L721,74 L729,74 L726.5,71.5 L733,65 L730,62 L723.5,68.5 Z" fill="#f0d060" stroke="#2a3a1a" stroke-width="0.9"/>
<circle cx="718" cy="78.5" r="2.3" fill="#e04030"/>
<line x1="745.4" y1="58" x2="745.4" y2="92" stroke="#c4c4c4" stroke-width="1"/>
<text x="754" y="83.5" font-family="Liberation Serif" font-style="italic" font-size="27" fill="#111">f</text>
<text x="764" y="84" font-family="Liberation Serif" font-style="italic" font-size="21" fill="#1a2a3a" letter-spacing="-1.6">(x)</text>
<line x1="787.4" y1="55" x2="787.4" y2="95" stroke="#999" stroke-width="1"/>
<rect x="792.1" y="60" width="1.6" height="1.6" fill="#9a9a9a"/>
<rect x="792.1" y="64" width="1.6" height="1.6" fill="#9a9a9a"/>
<rect x="792.1" y="68" width="1.6" height="1.6" fill="#9a9a9a"/>
<rect x="792.1" y="72" width="1.6" height="1.6" fill="#9a9a9a"/>
<rect x="792.1" y="76" width="1.6" height="1.6" fill="#9a9a9a"/>
<rect x="792.1" y="80" width="1.6" height="1.6" fill="#9a9a9a"/>
<rect x="792.1" y="84" width="1.6" height="1.6" fill="#9a9a9a"/>
<rect x="792.1" y="88" width="1.6" height="1.6" fill="#9a9a9a"/>
<text transform="translate(803,86.3) scale(0.64,1)" x="0" y="0" font-family="Liberation Serif" font-weight="bold" font-size="33" fill="#1f5f8e" letter-spacing="-1">Ab</text>
<rect x="840.2" y="64" width="29.2" height="24.9" fill="url(#gi)" stroke="#0e3a5e" stroke-width="1.3"/>
<path d="M841,87 L848,79 L852,82 L859,74 L864,79 L869,77 L869,88 L841,88 Z" fill="#c8e8f8"/>
<path d="M859,63 h6 v-3 h4 v3 h3 v4 h-3 v3 h-4 v-3 h-6 Z" fill="#f0d040" stroke="#806010" stroke-width="0.6"/>
<path d="M880,81 L893,65.5 L893,85.5 L903,76.5" fill="none" stroke="#1a4a6a" stroke-width="2"/>
<rect x="915.4" y="62.3" width="26.9" height="25" fill="url(#lb2)" stroke="#2a2a2a" stroke-width="1.4"/>
<rect x="952.6" y="67.8" width="26.6" height="14.6" fill="url(#lb2)" stroke="#2a2a2a" stroke-width="1.4"/>
<circle cx="1002.9" cy="74.3" r="12.8" fill="url(#lb2)" stroke="#2a2a2a" stroke-width="1.3"/>
<ellipse cx="1039.5" cy="74.3" rx="13.4" ry="6.4" fill="url(#lb2)" stroke="#2a2a2a" stroke-width="1.3"/>
<line x1="1062.8" y1="58" x2="1062.8" y2="92" stroke="#c4c4c4" stroke-width="1"/>
<rect x="1070" y="61.3" width="27.5" height="26.9" fill="#fff" stroke="#1a3a5a" stroke-width="1.3"/>
<rect x="1070" y="61.3" width="27.5" height="5" fill="#3a90c8"/>
<rect x="1082" y="71" width="13" height="12" fill="#fff" stroke="#1a3a5a" stroke-width="1"/>
<rect x="1082" y="71" width="13" height="2.5" fill="#3a90c8"/>
<path d="M1073,83 h4 v-3 h3 v3 h3 v3 h-3 v3 h-3 v-3 h-4 Z" fill="#f0d040" stroke="#806010" stroke-width="0.6"/>
</svg>
<div class="a" style="left:-1px;top:96px;width:265px;height:23px;background:#cdcdcd;border:1px solid #a9a9a9"></div>
<svg style="left:0;top:0" width="270" height="1000">
<rect x="222" y="102.5" width="6.5" height="6" fill="none" stroke="#111" stroke-width="1.6"/>
<rect x="219.5" y="105.5" width="6.5" height="6" fill="#cdcdcd" stroke="#111" stroke-width="1.6"/>
<path d="M245.5,104 L253,111.5 M253,104 L245.5,111.5" stroke="#111" stroke-width="1.9"/>
<path d="M237,140.5 L241.5,145 L246,140.5" fill="none" stroke="#222" stroke-width="1.1"/>
<circle cx="38" cy="891.1" r="7.3" fill="#fff" stroke="#c2c2c2" stroke-width="1.2"/>
<circle cx="152.8" cy="891.1" r="7.3" fill="#fff" stroke="#c2c2c2" stroke-width="1.2"/>
<line x1="0" y1="973.5" x2="264" y2="973.5" stroke="#9a9a9a" stroke-width="1"/>
<line x1="0" y1="993.5" x2="34" y2="993.5" stroke="#d0d0d0" stroke-width="1"/>
</svg>
<div class="a" style="left:-1px;top:132px;width:254px;height:21px;background:#d8d8d8;border:1px solid #adadad"></div>
<svg style="left:0;top:0" width="270" height="200"><path d="M237,140.5 L241.5,145 L246,140.5" fill="none" stroke="#222" stroke-width="1.1"/></svg>
<div class="t m" style="left:-4px;top:162.2px;font-size:13px;color:#111;transform:scaleY(1.22);transform-origin:0 10.8px">ng layers</div>
<div class="t m" style="left:-5px;top:201.2px;font-size:13px;color:#111;transform:scaleY(1.22);transform-origin:0 10.8px">s</div>
<div class="t m" style="left:-4.6px;top:243.2px;font-size:13px;color:#111;transform:scaleY(1.22);transform-origin:0 10.8px">pars</div>
<div class="a" style="left:-1px;top:263px;width:253px;height:25px;background:#d5d5d5;border:1px solid #adadad"></div>
<div class="t m" style="left:19.5px;top:270.2px;font-size:13px;color:#111;transform:scaleY(1.22);transform-origin:0 10.8px">Mapping Style...</div>
<div class="t m" style="left:52.8px;top:886.5px;font-size:13px;color:#777;transform:scaleY(1.22);transform-origin:0 10.8px">Paper</div>
<div class="t m" style="left:167.5px;top:886.5px;font-size:13px;color:#777;transform:scaleY(1.22);transform-origin:0 10.8px">Grid</div>
<div class="a" style="left:-1px;top:909px;width:253px;height:26px;background:#d5d5d5;border:1px solid #adadad"></div>
<div class="t m" style="left:59.8px;top:917.3px;font-size:13px;color:#111;transform:scaleY(1.22);transform-origin:0 10.8px">Redraw</div>
<div class="t m" style="left:0.5px;top:947.0px;font-size:13px;color:#111;transform:scaleY(1.22);transform-origin:0 10.8px">raw</div>
<div class="t m" style="left:-3.6px;top:977.9px;font-size:13px;color:#111;transform:scaleY(1.22);transform-origin:0 10.8px">ges</div>
<div class="a" style="left:264px;top:95px;width:5px;height:900px;background:#efefef"></div>
<div class="t" style="left:-1px;top:1004.5px;font-size:16.4px;color:#111">ct, Drag to Select Group</div>
<div class="a" style="left:1669px;top:998px;width:1px;height:30px;background:#d8d8d8"></div>
<svg style="left:0;top:0" width="1728" height="1080">
<defs><linearGradient id="edg" x1="0" y1="0" x2="1" y2="1"><stop offset="0" stop-color="#5fd08a"/><stop offset="0.5" stop-color="#1a9ae0"/><stop offset="1" stop-color="#1050b0"/></linearGradient><radialGradient id="clk" cx="0.5" cy="0.3" r="0.7"><stop offset="0" stop-color="#70b8ff"/><stop offset="1" stop-color="#1a78e0"/></radialGradient><linearGradient id="tpi" x1="0" y1="0" x2="1" y2="1"><stop offset="0" stop-color="#2060c0"/><stop offset="1" stop-color="#104090"/></linearGradient></defs>
<path d="M16.2,1051.4 L30.2,1051.4 M22.9,1047.9 L16.2,1063.1 M19.8,1055.8 L19.8,1064.0 M22.4,1057.2 L30.2,1057.2 M26.2,1053.1 L26.2,1062.8 M21.5,1063.1 L31.3,1063.1 M35.6,1049.1 L37.4,1050.8 M34.9,1054.0 L37.4,1054.9 L37.4,1060.7 M34.9,1063.1 L50.3,1063.1 M44.4,1047.9 L45.0,1049.6 M39.6,1051.4 L49.6,1051.4 M40.9,1053.1 L48.4,1060.7 M48.4,1053.1 L39.6,1060.7 M56.0,1048.8 L66.5,1048.8 L66.5,1055.8 L56.0,1055.8 L56.0,1048.8 M56.0,1052.2 L66.5,1052.2 M61.2,1048.8 L61.2,1062.8 M56.9,1059.2 L65.6,1059.2 M53.9,1063.1 L68.6,1063.1 M72.4,1050.5 L78.5,1050.5 M72.9,1053.7 L78.2,1053.7 L78.2,1057.8 L72.9,1057.8 L72.9,1053.7 M75.5,1047.9 L75.5,1063.8 M72.2,1061.0 L78.8,1060.3 M79.4,1053.7 L83.8,1048.4 L88.3,1053.7 M81.1,1054.3 L86.4,1054.3 M80.2,1056.1 L83.8,1056.1 L83.8,1063.6 L80.2,1063.6 L80.2,1056.1 M85.5,1056.1 L85.5,1061.9 M87.8,1055.4 L87.8,1063.8 M95.8,1048.8 L99.6,1050.8 L92.2,1063.6 M98.5,1052.6 L107.1,1063.6 M114.8,1047.9 L110.4,1055.8 M113.0,1052.2 L113.0,1063.8 M118.6,1047.9 L116.8,1053.1 M117.5,1051.4 L126.0,1051.4 L124.9,1053.7 M121.8,1053.1 L121.8,1063.6 L120.3,1062.8 M118.6,1056.6 L116.8,1061.0 M124.4,1056.6 L126.3,1061.0 M129.9,1048.8 L144.6,1048.8 M131.1,1050.8 L143.4,1050.8 L143.4,1054.9 L131.1,1054.9 L131.1,1050.8 M135.5,1048.8 L135.5,1054.9 M139.0,1048.8 L139.0,1054.9 M129.4,1058.4 L145.1,1058.4 M136.4,1055.8 L132.9,1061.9 L143.4,1063.8 M141.1,1057.8 L132.0,1064.0 M148.2,1052.2 L153.8,1052.2 M151.0,1047.7 L151.0,1062.8 L149.6,1062.0 M148.2,1059.6 L154.2,1056.8 M155.4,1049.1 L158.3,1049.1 L158.3,1055.8 L155.4,1055.8 M164.1,1049.1 L161.2,1049.1 L161.2,1055.8 L164.1,1055.8 M159.8,1047.7 L159.8,1056.6 M155.9,1057.8 L163.2,1057.8 L155.4,1063.8 M157.7,1059.6 L164.3,1063.8 M175.2,1047.3 L175.2,1050.5 M169.1,1049.1 L181.4,1049.1 M168.2,1053.3 L168.2,1051.4 L182.2,1051.4 L182.2,1053.3 M176.1,1052.2 L172.1,1055.4 L178.1,1056.6 L171.1,1060.3 L180.5,1059.2 M175.2,1059.2 L175.2,1064.0 M172.1,1061.0 L169.1,1063.6 M178.4,1061.0 L181.6,1063.6 M189.9,1047.7 L189.0,1050.2 M186.9,1050.5 L192.8,1050.5 L192.8,1063.1 L186.9,1063.1 L186.9,1050.5 M186.9,1056.6 L192.8,1056.6 M196.0,1047.7 L194.2,1053.3 M194.9,1051.5 L201.6,1051.5 L200.9,1063.6 L198.8,1062.8 M196.7,1055.8 L198.1,1058.2 M213.2,1047.3 L213.2,1052.6 M206.6,1063.8 L206.6,1052.2 L219.9,1052.2 L219.9,1063.6 L218.2,1062.8 M213.2,1052.6 L208.9,1059.6 M213.2,1055.0 L217.8,1059.6 M232.2,1047.3 L232.8,1049.1 M225.2,1052.2 L225.2,1049.6 L239.2,1049.6 L239.2,1052.2 M229.8,1052.2 L227.3,1054.7 M234.7,1052.2 L237.5,1054.7 M232.2,1053.3 L224.9,1058.5 M232.2,1053.3 L239.6,1058.5 M228.4,1058.2 L236.1,1058.2 L236.1,1063.8 L228.4,1063.8 L228.4,1058.2" fill="none" stroke="#3a3a3a" stroke-width="1.25" stroke-linecap="round" stroke-linejoin="round"/>
<circle cx="423.8" cy="1054.8" r="8" fill="none" stroke="#f4f4f4" stroke-width="2.6"/>
<path d="M476,1045.5 H490 M476,1064 H490" stroke="#eee" stroke-width="1.5"/><rect x="477" y="1049.5" width="11" height="10.5" fill="none" stroke="#eee" stroke-width="1.6"/><path d="M493.5,1045 V1065" stroke="#eee" stroke-width="1.6"/>
<defs><radialGradient id="tpg" cx="0.5" cy="0.5" r="0.5"><stop offset="0" stop-color="#e83818"/><stop offset="0.45" stop-color="#f0a020"/><stop offset="0.75" stop-color="#f8f060"/><stop offset="1" stop-color="#40a0e0" stop-opacity="0"/></radialGradient></defs>
<defs><linearGradient id="edg2" x1="1" y1="0" x2="0" y2="1"><stop offset="0" stop-color="#58c878"/><stop offset="0.45" stop-color="#1aa0d8"/><stop offset="1" stop-color="#0c58b0"/></linearGradient></defs>
<circle cx="548.2" cy="1055.1" r="15.2" fill="url(#edg2)"/>
<path d="M537,1060 C536,1052 543,1047 550,1048 C556,1049 559,1054 556,1058 C553,1061 547,1060 547,1056" fill="none" stroke="#0a3a78" stroke-width="3.2" opacity="0.8"/>
<rect x="595.2" y="1044.7" width="29" height="25.2" rx="3.5" fill="#f4f4f4"/><path d="M602.2,1046.5 V1041.5 H616.6 V1046.5" fill="none" stroke="#4a90c8" stroke-width="1.5"/>
<rect x="603.9" y="1052.3" width="5" height="5" fill="#e85a2a"/><rect x="609.8" y="1052.3" width="5" height="5" fill="#70a830"/><rect x="603.9" y="1058.1" width="5" height="5" fill="#1a90d8"/><rect x="609.8" y="1058.1" width="5" height="5" fill="#f0b020"/>
<path d="M659.5,1040 L679.1,1040 L676.5,1058.8 L657.4,1058.8 Z" fill="#2a8ab8" opacity="0.9"/><path d="M666.5,1049.4 L686.4,1049.4 L683.5,1068.9 L664,1068.9 Z" fill="#3a64f0" opacity="0.95"/>
<rect x="705" y="1030" width="60" height="50" fill="#4a4541"/><rect x="705" y="1077" width="60" height="3" fill="#7fb0e8"/>
<rect x="720.4" y="1040.7" width="27.5" height="27.5" fill="#1a64b8"/>
<path d="M721,1048 L728,1041 M721,1055 L735,1041 M721,1062 L742,1041 M724,1068 L748,1044" stroke="#50a8e8" stroke-width="1.6"/>
<circle cx="732.7" cy="1053.7" r="13" fill="url(#tpg)"/><circle cx="732.7" cy="1053.7" r="5.5" fill="#e03a20"/>
<circle cx="1323" cy="1054" r="9" fill="#f6c844"/><circle cx="1318" cy="1051" r="8" fill="#322c26"/>
<ellipse cx="1316" cy="1059" rx="10" ry="6" fill="#d8d8d8"/><circle cx="1327" cy="1064" r="3" fill="#e02030"/>
<text x="1342" y="1061" font-family="Liberation Sans" font-size="17" fill="#f2f2f2">9°C</text>
<path d="M1385.0,1046.8 L1398.0,1046.8 M1391.5,1046.8 L1391.5,1053.1 M1384.7,1053.1 L1384.7,1048.7 L1398.3,1048.7 L1398.3,1053.1 M1387.2,1050.1 L1389.5,1050.4 M1393.5,1050.1 L1395.8,1050.4 M1387.2,1051.8 L1389.5,1052.1 M1393.5,1051.8 L1395.8,1052.1 M1389.8,1053.8 L1386.1,1056.5 M1388.4,1054.8 L1396.6,1054.8 L1388.1,1058.9 M1390.1,1056.2 L1397.5,1058.2 M1385.0,1058.9 L1398.0,1058.9 M1391.5,1056.9 L1389.0,1062.7 M1395.2,1058.9 L1395.6,1062.3 L1393.2,1062.3 M1404.0,1046.8 L1417.0,1046.8 M1410.5,1046.8 L1410.5,1052.8 M1403.7,1052.8 L1403.7,1048.7 L1417.3,1048.7 L1417.3,1052.8 M1406.2,1050.1 L1408.5,1050.4 M1412.5,1050.1 L1414.8,1050.4 M1406.2,1051.6 L1408.5,1052.0 M1412.5,1051.6 L1414.8,1052.0 M1403.4,1054.5 L1409.1,1054.5 M1407.1,1053.7 L1403.7,1057.9 M1408.0,1056.2 L1403.7,1062.2 M1408.5,1058.2 L1405.4,1061.6 M1410.8,1054.2 L1417.3,1054.2 L1417.3,1057.9 L1410.8,1057.9 L1410.8,1054.2 M1414.1,1054.2 L1414.1,1061.3 M1410.8,1056.0 L1417.3,1056.0 M1411.3,1059.6 L1417.0,1059.6 M1410.2,1062.3 L1418.2,1062.3" fill="none" stroke="#eeeeee" stroke-width="1.2" stroke-linecap="round" stroke-linejoin="round"/>
<path d="M1450,1060 L1457,1053 L1464,1060" fill="none" stroke="#eee" stroke-width="1.5"/>
<ellipse cx="1487" cy="1056" rx="10" ry="5" fill="#e8e8e8"/><circle cx="1489" cy="1052" r="5.5" fill="#e8e8e8"/>
<rect x="1510" y="1050" width="16" height="9" fill="none" stroke="#eee" stroke-width="1.5"/><rect x="1512" y="1052" width="12" height="5" fill="#eee"/><path d="M1526,1053 v3" stroke="#eee" stroke-width="2"/>
<path d="M1541,1062 A14,14 0 0 1 1556,1048 M1544.5,1062 A10.5,10.5 0 0 1 1556,1051.5 M1548,1062 A7,7 0 0 1 1556,1055" fill="none" stroke="#eee" stroke-width="1.2"/><circle cx="1554" cy="1061" r="1.6" fill="#eee"/>
<path d="M1569,1052 h3 l5,-5 v16 l-5,-5 h-3 Z" fill="none" stroke="#eee" stroke-width="1.3"/><path d="M1580,1051 a5,5 0 0 1 0,8 M1583,1048 a9,9 0 0 1 0,14" fill="none" stroke="#eee" stroke-width="1.3"/>
<path d="M1598.8,1048.5 L1613.7,1048.5 M1603.0,1046.3 L1603.0,1050.6 M1609.5,1046.3 L1609.5,1050.6 M1601.3,1055.9 L1601.3,1051.9 L1611.2,1051.9 L1611.2,1055.9 M1606.2,1050.6 L1606.2,1056.6 M1598.8,1056.4 L1613.7,1056.4 M1606.2,1056.6 L1599.7,1061.8 M1606.6,1057.2 L1613.2,1061.8" fill="none" stroke="#eeeeee" stroke-width="1.3" stroke-linecap="round" stroke-linejoin="round"/>
<path d="M1633,1046 L1650,1045 L1652,1063 L1635,1065 Z" fill="#e85a20"/><text x="1637" y="1061" font-family="Liberation Sans" font-weight="bold" font-size="14" fill="#fff">S</text>
<text x="1692" y="1050" font-family="Liberation Sans" font-size="15" fill="#f2f2f2">17:46</text>
<text x="1669" y="1072" font-family="Liberation Sans" font-size="16" fill="#f2f2f2">2022/11</text>
<circle cx="1709.2" cy="451.7" r="30.8" fill="#f4f8fc" opacity="0.95"/>
<circle cx="1709.2" cy="451.7" r="26.7" fill="url(#clk)"/>
<text x="1689" y="458" font-family="Liberation Sans" font-size="17" fill="#eaf4ff">21:02</text>
</svg>
</body></html>
